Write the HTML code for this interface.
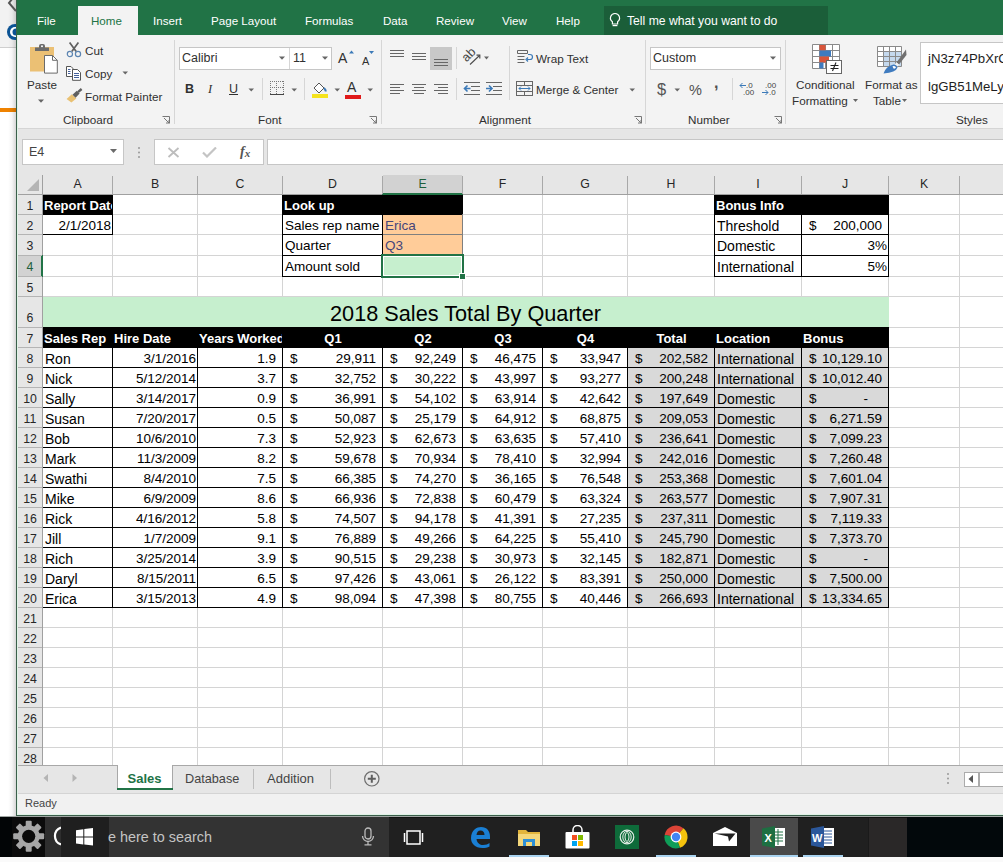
<!DOCTYPE html>
<html><head><meta charset="utf-8">
<style>
html,body{margin:0;padding:0}
body{width:1003px;height:862px;overflow:hidden;position:relative;background:#fff;font-family:"Liberation Sans",sans-serif}
.a{position:absolute}
.t{white-space:nowrap}
.rt{position:absolute;white-space:nowrap;font-size:11.7px;line-height:14px;color:#303030}
.tab{position:absolute;white-space:nowrap;font-size:11.6px;line-height:14px;color:#fff;top:14px}
</style></head><body>
<!-- background window left -->
<div class="a" style="left:0;top:0;width:16px;height:47px;background:#f2f2f2"></div>
<div class="a" style="left:0;top:47px;width:16px;height:1px;background:#cfcfcf"></div>
<div class="a" style="left:0;top:108px;width:16px;height:4px;background:#ef8200"></div>
<div class="a" style="left:8px;top:0;width:8px;height:817px;background:linear-gradient(to right,rgba(0,0,0,0),rgba(0,0,0,0.04) 50%,rgba(0,0,0,0.16))"></div>
<svg class="a" style="left:0;top:0" width="16" height="48"><path d="M16 -6 L9 3 L16 11" stroke="#555" stroke-width="2" fill="none"/><circle cx="15" cy="32" r="8" fill="#0b5394"/><circle cx="15" cy="32" r="5" fill="#fff"/><circle cx="16" cy="32" r="3.5" fill="#0b5394"/></svg>

<!-- excel window -->
<div class="a" style="left:16px;top:0;width:1px;height:816px;background:#3b5f4b"></div>
<div class="a" style="left:17px;top:0;width:986px;height:816px;background:#f3f3f3"></div>
<div class="a" style="left:17px;top:814px;width:986px;height:1px;background:#e0f3e6"></div>
<div class="a" style="left:16px;top:815px;width:987px;height:1px;background:#3a5d4a"></div>
<!-- tab bar -->
<div class="a" style="left:17px;top:0;width:986px;height:35px;background:#217346"></div>
<div class="a" style="left:78px;top:6px;width:60px;height:29px;background:#f3f3f3"></div>
<div class="tab" style="left:37px">File</div>
<div class="tab" style="left:91px;color:#217346">Home</div>
<div class="tab" style="left:153px">Insert</div>
<div class="tab" style="left:211px">Page Layout</div>
<div class="tab" style="left:305px">Formulas</div>
<div class="tab" style="left:383px">Data</div>
<div class="tab" style="left:436px">Review</div>
<div class="tab" style="left:502px">View</div>
<div class="tab" style="left:556px">Help</div>
<div class="a" style="left:604px;top:6px;width:224px;height:29px;background:#1b5e39"></div>
<svg class="a" style="left:608px;top:12px" width="14" height="16"><path d="M7 1.5a4.5 4.5 0 0 0-2.6 8.2V12h5.2V9.7A4.5 4.5 0 0 0 7 1.5z" stroke="#fff" stroke-width="1.2" fill="none"/><path d="M4.6 13.6h4.8" stroke="#fff" stroke-width="1.2"/></svg>
<div class="tab" style="left:627px;font-size:12.2px">Tell me what you want to do</div>

<!-- ribbon -->
<div class="a" style="left:17px;top:128px;width:986px;height:1px;background:#d5d5d5"></div>
<div class="a" style="left:174px;top:40px;width:1px;height:84px;background:#d6d6d6"></div>
<div class="a" style="left:381px;top:40px;width:1px;height:84px;background:#d6d6d6"></div>
<div class="a" style="left:645px;top:40px;width:1px;height:84px;background:#d6d6d6"></div>
<div class="a" style="left:785px;top:40px;width:1px;height:84px;background:#d6d6d6"></div>
<!-- clipboard -->
<svg class="a" style="left:28px;top:42px" width="34" height="34">
 <rect x="2" y="5" width="24" height="24.5" fill="#ebc074"/>
 <path d="M7 5.5 h14 v3.5 h-14z" fill="#6b6b6b"/><path d="M11 6 v-2 q0-2 2-2 h2 q2 0 2 2 v2z" fill="#6b6b6b"/><circle cx="14" cy="4.2" r="1" fill="#fff"/>
 <path d="M16.5 13.5 h8 l4.8 4.8 v12.8 h-12.8z" fill="#fff" stroke="#6b6b6b" stroke-width="1"/>
 <path d="M24.5 13.5 v4.8 h4.8" fill="none" stroke="#6b6b6b" stroke-width="1"/>
</svg>
<div class="rt" style="left:27px;top:78px">Paste</div>
<svg class="a" style="left:37px;top:99px" width="8" height="5"><path d="M1 0.5h6l-3 3.2z" fill="#666"/></svg>
<svg class="a" style="left:66px;top:42px" width="16" height="16"><path d="M3.6 0.5 L10.2 9.6 M12.4 0.5 L5.8 9.6" stroke="#5f5f5f" stroke-width="1.7"/><circle cx="3.9" cy="12" r="2.6" fill="none" stroke="#5b84b1" stroke-width="1.2"/><circle cx="12" cy="12" r="2.6" fill="none" stroke="#5b84b1" stroke-width="1.2"/></svg>
<div class="rt" style="left:85px;top:44px">Cut</div>
<svg class="a" style="left:65px;top:65px" width="17" height="17"><path d="M1.5 1.5h4.5l1.8 1.8v8.2h-6.3z" fill="#fff" stroke="#555"/><path d="M3 4.5h2.5M3 6.5h2.5M3 8.5h2.5" stroke="#44609a" stroke-width="1"/><path d="M7.5 4.5h5l3 3v7.8h-8z" fill="#fff" stroke="#555"/><path d="M9 8.5h5M9 10.5h5M9 12.5h5" stroke="#44609a" stroke-width="1"/></svg>
<div class="rt" style="left:85px;top:67px">Copy</div>
<svg class="a" style="left:122px;top:71px" width="7" height="4"><path d="M0.5 0.5h5.5l-2.75 3z" fill="#666"/></svg>
<svg class="a" style="left:66px;top:88px" width="17" height="16"><path d="M0.6 11 L5.8 6.2 L10.4 10.4 L5.4 14.6z" fill="#e9c173"/><path d="M6.5 6.8 L10.8 2.8 L13.6 5.6 L9.6 9.8z" fill="#5f5f5f"/><path d="M12 4.2 L15.6 1" stroke="#5f5f5f" stroke-width="2.4"/></svg>
<div class="rt" style="left:85px;top:90px">Format Painter</div>
<div class="rt" style="left:63px;top:113px">Clipboard</div>
<svg class="a" style="left:162px;top:116px" width="8" height="8"><path d="M0.5 0.5h7v7" fill="none" stroke="#777"/><path d="M2 2l5 5M4 7h3v-3" stroke="#777" fill="none"/></svg>

<!-- font group -->
<div class="a" style="left:179px;top:47px;width:110px;height:21px;background:#fff;border:1px solid #c6c6c6"></div>
<div class="a" style="left:290px;top:47px;width:41px;height:21px;background:#fff;border:1px solid #c6c6c6;border-left:none"></div>
<div class="a" style="left:289px;top:48px;width:1px;height:21px;background:#d6d6d6"></div>
<div class="rt" style="left:182px;top:51px;font-size:12.5px">Calibri</div>
<div class="rt" style="left:293px;top:51px;font-size:12.5px">11</div>
<svg class="a" style="left:278px;top:56px" width="8" height="5"><path d="M1 0.5h6l-3 3.2z" fill="#666"/></svg>
<svg class="a" style="left:321px;top:56px" width="8" height="5"><path d="M1 0.5h6l-3 3.2z" fill="#666"/></svg>
<div class="rt" style="left:338px;top:51px;font-size:14px">A</div>
<svg class="a" style="left:349px;top:50px" width="6" height="4"><path d="M0 3.5h5l-2.5-3z" fill="#3c7ab8"/></svg>
<div class="rt" style="left:362px;top:54px;font-size:11px">A</div>
<svg class="a" style="left:369px;top:51px" width="6" height="4"><path d="M0 0h5l-2.5 3z" fill="#3c7ab8"/></svg>
<div class="rt" style="left:185px;top:82px;font-weight:bold;font-size:12.5px">B</div>
<div class="rt" style="left:208px;top:82px;font-style:italic;font-size:12.5px;font-family:'Liberation Serif'">I</div>
<div class="rt" style="left:229px;top:82px;font-size:12.5px;text-decoration:underline">U</div>
<svg class="a" style="left:248px;top:88px" width="7" height="4"><path d="M0.5 0.5h5.5l-2.75 3z" fill="#666"/></svg>
<div class="a" style="left:262px;top:78px;width:1px;height:22px;background:#d6d6d6"></div>
<svg class="a" style="left:270px;top:81px" width="14" height="14"><g fill="#777"><rect x="0" y="0" width="1" height="1"/><rect x="0" y="0" width="1" height="1"/><rect x="13" y="0" width="1" height="1"/><rect x="0" y="6" width="1" height="1"/><rect x="6" y="0" width="1" height="1"/><rect x="2" y="0" width="1" height="1"/><rect x="0" y="2" width="1" height="1"/><rect x="13" y="2" width="1" height="1"/><rect x="2" y="6" width="1" height="1"/><rect x="6" y="2" width="1" height="1"/><rect x="4" y="0" width="1" height="1"/><rect x="0" y="4" width="1" height="1"/><rect x="13" y="4" width="1" height="1"/><rect x="4" y="6" width="1" height="1"/><rect x="6" y="4" width="1" height="1"/><rect x="6" y="0" width="1" height="1"/><rect x="0" y="6" width="1" height="1"/><rect x="13" y="6" width="1" height="1"/><rect x="6" y="6" width="1" height="1"/><rect x="6" y="6" width="1" height="1"/><rect x="8" y="0" width="1" height="1"/><rect x="0" y="8" width="1" height="1"/><rect x="13" y="8" width="1" height="1"/><rect x="8" y="6" width="1" height="1"/><rect x="6" y="8" width="1" height="1"/><rect x="10" y="0" width="1" height="1"/><rect x="0" y="10" width="1" height="1"/><rect x="13" y="10" width="1" height="1"/><rect x="10" y="6" width="1" height="1"/><rect x="6" y="10" width="1" height="1"/><rect x="12" y="0" width="1" height="1"/><rect x="0" y="12" width="1" height="1"/><rect x="13" y="12" width="1" height="1"/><rect x="12" y="6" width="1" height="1"/><rect x="6" y="12" width="1" height="1"/></g><path d="M0 13.5h14" stroke="#444"/></svg>
<svg class="a" style="left:291px;top:88px" width="7" height="4"><path d="M0.5 0.5h5.5l-2.75 3z" fill="#666"/></svg>
<div class="a" style="left:304px;top:78px;width:1px;height:22px;background:#d6d6d6"></div>
<svg class="a" style="left:311px;top:80px" width="18" height="18"><path d="M3 8 l5 -5 l5 5 l-5 5z" fill="#fff" stroke="#555"/><path d="M13 8 q2 2 1.5 3.5" stroke="#3c7ab8" stroke-width="2" fill="none"/><rect x="1" y="14" width="16" height="4" fill="#f5e31d"/></svg>
<svg class="a" style="left:334px;top:88px" width="7" height="4"><path d="M0.5 0.5h5.5l-2.75 3z" fill="#666"/></svg>
<div class="rt" style="left:347px;top:80px;font-size:14px">A</div>
<div class="a" style="left:345px;top:95px;width:16px;height:4px;background:#e01a1a"></div>
<svg class="a" style="left:367px;top:88px" width="7" height="4"><path d="M0.5 0.5h5.5l-2.75 3z" fill="#666"/></svg>
<div class="rt" style="left:258px;top:113px">Font</div>
<svg class="a" style="left:369px;top:116px" width="8" height="8"><path d="M0.5 0.5h7v7" fill="none" stroke="#777"/><path d="M2 2l5 5M4 7h3v-3" stroke="#777" fill="none"/></svg>

<!-- alignment group -->
<svg class="a" style="left:388px;top:47px" width="70" height="52">
 <g stroke="#666" stroke-width="1">
 <path d="M2 3.5h14M2 6.5h14M2 9.5h14"/>
 <path d="M24 6.5h14M24 9.5h14M24 12.5h14"/>
 </g>
 <rect x="42" y="0" width="22" height="23" fill="#c8c8c8"/>
 <path d="M46 12.5h14M46 15.5h14M46 18.5h14" stroke="#666"/>
 <g stroke="#666" stroke-width="1">
 <path d="M2 37.5h14M2 40.5h10M2 43.5h14M2 46.5h10"/>
 <path d="M24 37.5h14M26 40.5h10M24 43.5h14M26 46.5h10"/>
 <path d="M46 37.5h14M50 40.5h10M46 43.5h14M50 46.5h10"/>
 </g>
</svg>
<div class="a" style="left:456px;top:47px;width:1px;height:22px;background:#d6d6d6"></div>
<div class="a" style="left:456px;top:78px;width:1px;height:22px;background:#d6d6d6"></div>
<svg class="a" style="left:462px;top:48px" width="30" height="20"><text x="0" y="0" font-size="12.5" font-family="Liberation Sans" fill="#4a4a4a" transform="translate(4.5 14.5) rotate(-45)">ab</text><path d="M8 16.5 L17.5 7.5" stroke="#4a4a4a" stroke-width="1.1"/><path d="M14.5 7.2h3.3v3.3" stroke="#4a4a4a" fill="none" stroke-width="1.2"/><path d="M22 8.5h5l-2.5 3z" fill="#666"/></svg>
<svg class="a" style="left:463px;top:81px" width="42" height="15"><path d="M1 1.5h16M8 5.5h9M8 9.5h9M1 13.5h16" stroke="#666"/><path d="M1.5 7.5h6M4.5 4.5l-3 3l3 3" stroke="#3c7ab8" stroke-width="1.6" fill="none"/><path d="M23 1.5h16M30 5.5h9M30 9.5h9M23 13.5h16" stroke="#666"/><path d="M23 7.5h6M26 4.5l3 3l-3 3" stroke="#3c7ab8" stroke-width="1.6" fill="none"/></svg>
<div class="a" style="left:509px;top:46px;width:1px;height:54px;background:#d6d6d6"></div>
<svg class="a" style="left:516px;top:49px" width="18" height="16"><path d="M1.5 1.5h10v3h-10zM1.5 7.5h7M1.5 10.5h7M1.5 13.5h7" stroke="#666" fill="none"/><path d="M11 10.5h3q2.5 0 2.5-2.5t-2.5-2.5h-2M12 8.5l-2 2l2 2" stroke="#3c7ab8" fill="none" stroke-width="1.2"/></svg>
<div class="rt" style="left:536px;top:52px">Wrap Text</div>
<svg class="a" style="left:516px;top:81px" width="17" height="15"><rect x="0.5" y="0.5" width="16" height="14" fill="none" stroke="#666"/><path d="M0.5 4.5h16M0.5 10.5h16M8.5 0.5v4M8.5 10.5v4" stroke="#666"/><path d="M3 7.5h11M5 5.5l-2 2l2 2M12 5.5l2 2l-2 2" stroke="#3c7ab8" fill="none"/></svg>
<div class="rt" style="left:536px;top:83px">Merge &amp; Center</div>
<svg class="a" style="left:629px;top:88px" width="7" height="4"><path d="M0.5 0.5h5.5l-2.75 3z" fill="#666"/></svg>
<div class="rt" style="left:479px;top:113px">Alignment</div>
<svg class="a" style="left:634px;top:116px" width="8" height="8"><path d="M0.5 0.5h7v7" fill="none" stroke="#777"/><path d="M2 2l5 5M4 7h3v-3" stroke="#777" fill="none"/></svg>

<!-- number group -->
<div class="a" style="left:650px;top:47px;width:129px;height:21px;background:#fff;border:1px solid #c6c6c6"></div>
<div class="rt" style="left:653px;top:51px;font-size:12.5px">Custom</div>
<svg class="a" style="left:769px;top:56px" width="8" height="5"><path d="M1 0.5h6l-3 3.2z" fill="#666"/></svg>
<div class="rt" style="left:657px;top:81px;font-size:16.5px;line-height:16px;color:#555">$</div>
<svg class="a" style="left:674px;top:88px" width="7" height="4"><path d="M0.5 0.5h5.5l-2.75 3z" fill="#666"/></svg>
<div class="rt" style="left:689px;top:82px;font-size:14.5px;line-height:16px;color:#505050">%</div>
<div class="rt" style="left:714px;top:76px;font-size:16px;font-weight:bold;color:#505050">,</div>
<div class="a" style="left:732px;top:78px;width:1px;height:22px;background:#d6d6d6"></div>
<svg class="a" style="left:739px;top:81px" width="40" height="15">
 <text x="7" y="7" font-size="8" font-family="Liberation Sans" fill="#444">.0</text><text x="4" y="14" font-size="8" font-family="Liberation Sans" fill="#444">.00</text>
 <path d="M1 4.5h6M3.5 2l-2.5 2.5l2.5 2.5" stroke="#3c7ab8" fill="none"/>
 <text x="26" y="7" font-size="8" font-family="Liberation Sans" fill="#444">.00</text><text x="30" y="14" font-size="8" font-family="Liberation Sans" fill="#444">.0</text>
 <path d="M23 11.5h6M26.5 9l2.5 2.5l-2.5 2.5" stroke="#3c7ab8" fill="none"/>
</svg>
<div class="rt" style="left:688px;top:113px">Number</div>
<svg class="a" style="left:774px;top:116px" width="8" height="8"><path d="M0.5 0.5h7v7" fill="none" stroke="#777"/><path d="M2 2l5 5M4 7h3v-3" stroke="#777" fill="none"/></svg>

<!-- styles group -->
<svg class="a" style="left:811px;top:43px" width="33" height="32">
 <rect x="1.5" y="1.5" width="27" height="24" fill="#fff"/>
 <path d="M1.5 1.5h27v24h-27zM1.5 7.5h27M1.5 13.5h27M1.5 19.5h27M8.5 1.5v24M14.5 1.5v24M21.5 1.5v24" fill="none" stroke="#8a8a8a"/>
 <rect x="8.5" y="2" width="6" height="5.5" fill="#d9553a"/><rect x="8.5" y="7.5" width="11.5" height="6" fill="#3f7bbf"/><rect x="8.5" y="13.5" width="9.5" height="6" fill="#d9553a"/><rect x="8.5" y="19.5" width="4" height="6" fill="#3f7bbf"/>
 <rect x="15.5" y="17.5" width="15" height="13" fill="#fff" stroke="#666"/>
 <path d="M19.5 22.5h8M19.5 25.5h8M25 19.5l-3.5 8.5" stroke="#222" stroke-width="1.1"/>
</svg>
<div class="rt" style="left:796px;top:78px">Conditional</div>
<div class="rt" style="left:792px;top:94px">Formatting</div>
<svg class="a" style="left:853px;top:99px" width="6" height="4"><path d="M0 0h5l-2.5 3z" fill="#666"/></svg>
<svg class="a" style="left:876px;top:44px" width="33" height="31">
 <rect x="1.5" y="2.5" width="24" height="20" fill="#fff"/>
 <rect x="7.5" y="7.5" width="18" height="15" fill="#c5d9ee"/>
 <path d="M1.5 2.5h24v20h-24zM1.5 7.5h24M1.5 12.5h24M1.5 17.5h24M7.5 2.5v20M13.5 2.5v20M19.5 2.5v20" fill="none" stroke="#8a8a8a"/>
 <path d="M30 5.5 L30.5 11 L23 20.5 L20.5 18.5z" fill="#707070"/>
 <path d="M20.5 18.5 L23 20.5 L21.5 22.5 L18.5 20.5z" fill="#f3f3f3"/>
 <path d="M7.5 29.5 Q10 22 17.5 20.5 Q21 20.8 21.5 23.5 Q20 28.5 7.5 29.5z" fill="#3f7bbf"/>
 <path d="M16.5 22.3 Q19.5 21.5 20 23.6 Q19 25 17.5 24.5z" fill="#fff"/>
</svg>
<div class="rt" style="left:865px;top:78px">Format as</div>
<div class="rt" style="left:873px;top:94px">Table</div>
<svg class="a" style="left:902px;top:99px" width="6" height="4"><path d="M0 0h5l-2.5 3z" fill="#666"/></svg>
<div class="a" style="left:920px;top:42px;width:90px;height:62px;background:#fff;border:1px solid #c6c6c6;box-sizing:border-box"></div>
<div class="a t" style="left:928px;top:51px;font-size:13.2px;line-height:16px;color:#1e1e1e">jN3z74PbXrC</div>
<div class="a t" style="left:928px;top:79px;font-size:13.2px;line-height:16px;color:#1e1e1e">lgGB51MeLy</div>
<div class="rt" style="left:956px;top:113px">Styles</div>

<!-- formula bar -->
<div class="a" style="left:17px;top:129px;width:986px;height:46px;background:#e6e6e6"></div>
<div class="a" style="left:22px;top:139px;width:100px;height:24px;background:#fff;border:1px solid #c6c6c6"></div>
<div class="a t" style="left:29px;top:144px;font-size:12.5px;line-height:16px;color:#444">E4</div>
<svg class="a" style="left:110px;top:149px" width="9" height="6"><path d="M0 0h7l-3.5 4z" fill="#6a6a6a"/></svg>
<svg class="a" style="left:137px;top:146px" width="4" height="13"><circle cx="2" cy="2" r="1" fill="#999"/><circle cx="2" cy="6.5" r="1" fill="#999"/><circle cx="2" cy="11" r="1" fill="#999"/></svg>
<div class="a" style="left:154px;top:139px;width:108px;height:24px;background:#fff;border:1px solid #c6c6c6"></div>
<svg class="a" style="left:167px;top:147px" width="13" height="11"><path d="M1.5 1l10 9M11.5 1l-10 9" stroke="#bdbdbd" stroke-width="1.8"/></svg>
<svg class="a" style="left:202px;top:147px" width="15" height="11"><path d="M1 5.5l4 4l9 -9" stroke="#c4c4c4" stroke-width="2.2" fill="none"/></svg>
<div class="a t" style="left:240px;top:144px;font-size:14px;line-height:16px;color:#555;font-family:'Liberation Serif';font-style:italic;font-weight:bold">f<span style="font-size:11px;position:relative;top:1px">x</span></div>
<div class="a" style="left:267px;top:139px;width:740px;height:24px;background:#fff;border:1px solid #c6c6c6"></div>

<div class="a" style="left:43px;top:195px;width:960px;height:570px;background:#fff;"></div>
<div class="a" style="left:112px;top:195px;width:1px;height:570px;background:#d4d4d4;"></div>
<div class="a" style="left:197px;top:195px;width:1px;height:570px;background:#d4d4d4;"></div>
<div class="a" style="left:282px;top:195px;width:1px;height:570px;background:#d4d4d4;"></div>
<div class="a" style="left:382px;top:195px;width:1px;height:570px;background:#d4d4d4;"></div>
<div class="a" style="left:462px;top:195px;width:1px;height:570px;background:#d4d4d4;"></div>
<div class="a" style="left:542px;top:195px;width:1px;height:570px;background:#d4d4d4;"></div>
<div class="a" style="left:627px;top:195px;width:1px;height:570px;background:#d4d4d4;"></div>
<div class="a" style="left:714px;top:195px;width:1px;height:570px;background:#d4d4d4;"></div>
<div class="a" style="left:801px;top:195px;width:1px;height:570px;background:#d4d4d4;"></div>
<div class="a" style="left:888px;top:195px;width:1px;height:570px;background:#d4d4d4;"></div>
<div class="a" style="left:959px;top:195px;width:1px;height:570px;background:#d4d4d4;"></div>
<div class="a" style="left:43px;top:214px;width:960px;height:1px;background:#d4d4d4;"></div>
<div class="a" style="left:43px;top:234px;width:960px;height:1px;background:#d4d4d4;"></div>
<div class="a" style="left:43px;top:255px;width:960px;height:1px;background:#d4d4d4;"></div>
<div class="a" style="left:43px;top:276px;width:960px;height:1px;background:#d4d4d4;"></div>
<div class="a" style="left:43px;top:296px;width:960px;height:1px;background:#d4d4d4;"></div>
<div class="a" style="left:43px;top:327px;width:960px;height:1px;background:#d4d4d4;"></div>
<div class="a" style="left:43px;top:347px;width:960px;height:1px;background:#d4d4d4;"></div>
<div class="a" style="left:43px;top:367px;width:960px;height:1px;background:#d4d4d4;"></div>
<div class="a" style="left:43px;top:387px;width:960px;height:1px;background:#d4d4d4;"></div>
<div class="a" style="left:43px;top:407px;width:960px;height:1px;background:#d4d4d4;"></div>
<div class="a" style="left:43px;top:427px;width:960px;height:1px;background:#d4d4d4;"></div>
<div class="a" style="left:43px;top:447px;width:960px;height:1px;background:#d4d4d4;"></div>
<div class="a" style="left:43px;top:467px;width:960px;height:1px;background:#d4d4d4;"></div>
<div class="a" style="left:43px;top:487px;width:960px;height:1px;background:#d4d4d4;"></div>
<div class="a" style="left:43px;top:507px;width:960px;height:1px;background:#d4d4d4;"></div>
<div class="a" style="left:43px;top:527px;width:960px;height:1px;background:#d4d4d4;"></div>
<div class="a" style="left:43px;top:547px;width:960px;height:1px;background:#d4d4d4;"></div>
<div class="a" style="left:43px;top:567px;width:960px;height:1px;background:#d4d4d4;"></div>
<div class="a" style="left:43px;top:587px;width:960px;height:1px;background:#d4d4d4;"></div>
<div class="a" style="left:43px;top:607px;width:960px;height:1px;background:#d4d4d4;"></div>
<div class="a" style="left:43px;top:627px;width:960px;height:1px;background:#d4d4d4;"></div>
<div class="a" style="left:43px;top:647px;width:960px;height:1px;background:#d4d4d4;"></div>
<div class="a" style="left:43px;top:667px;width:960px;height:1px;background:#d4d4d4;"></div>
<div class="a" style="left:43px;top:687px;width:960px;height:1px;background:#d4d4d4;"></div>
<div class="a" style="left:43px;top:707px;width:960px;height:1px;background:#d4d4d4;"></div>
<div class="a" style="left:43px;top:727px;width:960px;height:1px;background:#d4d4d4;"></div>
<div class="a" style="left:43px;top:747px;width:960px;height:1px;background:#d4d4d4;"></div>
<div class="a" style="left:43px;top:195px;width:70px;height:20px;background:#000;"></div>
<div class="a" style="left:282px;top:195px;width:181px;height:20px;background:#000;"></div>
<div class="a" style="left:714px;top:195px;width:175px;height:20px;background:#000;"></div>
<div class="a t" style="left:43px;top:196px;width:69px;height:20px;font-size:13px;line-height:20px;color:#fff;text-align:left;padding-left:1px;padding-right:3px;box-sizing:border-box;font-weight:bold;overflow:hidden;">Report Date</div>
<div class="a t" style="left:283px;top:196px;width:99px;height:20px;font-size:13px;line-height:20px;color:#fff;text-align:left;padding-left:1px;padding-right:3px;box-sizing:border-box;font-weight:bold;overflow:hidden;">Look up</div>
<div class="a t" style="left:715px;top:196px;width:86px;height:20px;font-size:13px;line-height:20px;color:#fff;text-align:left;padding-left:1px;padding-right:3px;box-sizing:border-box;font-weight:bold;overflow:hidden;">Bonus Info</div>
<div class="a t" style="left:43px;top:216px;width:69px;height:20px;font-size:13.5px;line-height:20px;color:#000;text-align:right;padding-left:2px;padding-right:1px;box-sizing:border-box;overflow:hidden;">2/1/2018</div>
<div class="a" style="left:42px;top:234px;width:71px;height:1px;background:#000;"></div>
<div class="a" style="left:112px;top:214px;width:1px;height:21px;background:#000;"></div>
<div class="a t" style="left:283px;top:216px;width:99px;height:20px;font-size:13.5px;line-height:20px;color:#000;text-align:left;padding-left:2px;padding-right:3px;box-sizing:border-box;">Sales rep name</div>
<div class="a t" style="left:283px;top:236px;width:99px;height:20px;font-size:13.5px;line-height:20px;color:#000;text-align:left;padding-left:2px;padding-right:3px;box-sizing:border-box;">Quarter</div>
<div class="a t" style="left:283px;top:257px;width:99px;height:20px;font-size:13.5px;line-height:20px;color:#000;text-align:left;padding-left:2px;padding-right:3px;box-sizing:border-box;">Amount sold</div>
<div class="a" style="left:383px;top:215px;width:79px;height:40px;background:#ffcc99;"></div>
<div class="a t" style="left:383px;top:216px;width:79px;height:20px;font-size:13.5px;line-height:20px;color:#45457a;text-align:left;padding-left:2px;padding-right:3px;box-sizing:border-box;overflow:hidden;">Erica</div>
<div class="a t" style="left:383px;top:236px;width:79px;height:20px;font-size:13.5px;line-height:20px;color:#45457a;text-align:left;padding-left:2px;padding-right:3px;box-sizing:border-box;overflow:hidden;">Q3</div>
<div class="a" style="left:382px;top:234px;width:81px;height:1px;background:#7f7f7f;"></div>
<div class="a" style="left:462px;top:214px;width:1px;height:42px;background:#7f7f7f;"></div>
<div class="a" style="left:382px;top:255px;width:81px;height:1px;background:#7f7f7f;"></div>
<div class="a" style="left:383px;top:256px;width:79px;height:20px;background:#c6efce;"></div>
<div class="a" style="left:282px;top:234px;width:101px;height:1px;background:#000;"></div>
<div class="a" style="left:282px;top:255px;width:101px;height:1px;background:#000;"></div>
<div class="a" style="left:282px;top:276px;width:101px;height:1px;background:#000;"></div>
<div class="a" style="left:282px;top:214px;width:1px;height:63px;background:#000;"></div>
<div class="a" style="left:382px;top:214px;width:1px;height:63px;background:#000;"></div>
<div class="a t" style="left:715px;top:216px;width:86px;height:20px;font-size:14px;line-height:20px;color:#000;text-align:left;padding-left:2px;padding-right:3px;box-sizing:border-box;overflow:hidden;">Threshold</div>
<div class="a" style="left:714px;top:234px;width:175px;height:1px;background:#000;"></div>
<div class="a t" style="left:715px;top:236px;width:86px;height:20px;font-size:14px;line-height:20px;color:#000;text-align:left;padding-left:2px;padding-right:3px;box-sizing:border-box;overflow:hidden;">Domestic</div>
<div class="a" style="left:714px;top:255px;width:175px;height:1px;background:#000;"></div>
<div class="a t" style="left:715px;top:257px;width:86px;height:20px;font-size:14px;line-height:20px;color:#000;text-align:left;padding-left:2px;padding-right:3px;box-sizing:border-box;overflow:hidden;">International</div>
<div class="a" style="left:714px;top:276px;width:175px;height:1px;background:#000;"></div>
<div class="a" style="left:714px;top:214px;width:1px;height:63px;background:#000;"></div>
<div class="a" style="left:801px;top:214px;width:1px;height:63px;background:#000;"></div>
<div class="a" style="left:888px;top:214px;width:1px;height:63px;background:#000;"></div>
<div class="a t" style="left:802px;top:216px;width:86px;height:20px;font-size:13.5px;line-height:20px;color:#000;text-align:left;padding-left:7px;padding-right:3px;box-sizing:border-box;overflow:hidden;">$</div>
<div class="a t" style="left:802px;top:216px;width:86px;height:20px;font-size:13.5px;line-height:20px;color:#000;text-align:right;padding-left:2px;padding-right:6px;box-sizing:border-box;overflow:hidden;">200,000</div>
<div class="a t" style="left:802px;top:236px;width:86px;height:20px;font-size:13.5px;line-height:20px;color:#000;text-align:right;padding-left:2px;padding-right:1px;box-sizing:border-box;overflow:hidden;">3%</div>
<div class="a t" style="left:802px;top:257px;width:86px;height:20px;font-size:13.5px;line-height:20px;color:#000;text-align:right;padding-left:2px;padding-right:1px;box-sizing:border-box;overflow:hidden;">5%</div>
<div class="a" style="left:43px;top:297px;width:846px;height:30px;background:#c6efce;"></div>
<div class="a t" style="left:43px;top:299px;width:845px;height:30px;font-size:21.7px;line-height:30px;text-align:center;color:#000">2018 Sales Total By Quarter</div>
<div class="a" style="left:43px;top:327px;width:846px;height:21px;background:#000;"></div>
<div class="a t" style="left:43px;top:329px;width:69px;height:20px;font-size:13px;line-height:20px;color:#fff;text-align:left;padding-left:1px;padding-right:0px;box-sizing:border-box;font-weight:bold;overflow:hidden;">Sales Rep</div>
<div class="a t" style="left:113px;top:329px;width:84px;height:20px;font-size:13px;line-height:20px;color:#fff;text-align:left;padding-left:1px;padding-right:0px;box-sizing:border-box;font-weight:bold;overflow:hidden;">Hire Date</div>
<div class="a t" style="left:198px;top:329px;width:84px;height:20px;font-size:13px;line-height:20px;color:#fff;text-align:left;padding-left:1px;padding-right:0px;box-sizing:border-box;font-weight:bold;overflow:hidden;">Years Worked</div>
<div class="a t" style="left:283px;top:329px;width:99px;height:20px;font-size:13px;line-height:20px;color:#fff;text-align:center;padding-left:1px;padding-right:0px;box-sizing:border-box;font-weight:bold;overflow:hidden;">Q1</div>
<div class="a t" style="left:383px;top:329px;width:79px;height:20px;font-size:13px;line-height:20px;color:#fff;text-align:center;padding-left:1px;padding-right:0px;box-sizing:border-box;font-weight:bold;overflow:hidden;">Q2</div>
<div class="a t" style="left:463px;top:329px;width:79px;height:20px;font-size:13px;line-height:20px;color:#fff;text-align:center;padding-left:1px;padding-right:0px;box-sizing:border-box;font-weight:bold;overflow:hidden;">Q3</div>
<div class="a t" style="left:543px;top:329px;width:84px;height:20px;font-size:13px;line-height:20px;color:#fff;text-align:center;padding-left:1px;padding-right:0px;box-sizing:border-box;font-weight:bold;overflow:hidden;">Q4</div>
<div class="a t" style="left:628px;top:329px;width:86px;height:20px;font-size:13px;line-height:20px;color:#fff;text-align:center;padding-left:1px;padding-right:0px;box-sizing:border-box;font-weight:bold;overflow:hidden;">Total</div>
<div class="a t" style="left:715px;top:329px;width:86px;height:20px;font-size:13px;line-height:20px;color:#fff;text-align:left;padding-left:1px;padding-right:0px;box-sizing:border-box;font-weight:bold;overflow:hidden;">Location</div>
<div class="a t" style="left:802px;top:329px;width:86px;height:20px;font-size:13px;line-height:20px;color:#fff;text-align:left;padding-left:1px;padding-right:0px;box-sizing:border-box;font-weight:bold;overflow:hidden;">Bonus</div>
<div class="a" style="left:628px;top:348px;width:260px;height:259px;background:#d9d9d9;"></div>
<div class="a t" style="left:43px;top:349px;width:69px;height:20px;font-size:14px;line-height:20px;color:#000;text-align:left;padding-left:2px;padding-right:3px;box-sizing:border-box;overflow:hidden;">Ron</div>
<div class="a t" style="left:113px;top:349px;width:84px;height:20px;font-size:13.5px;line-height:20px;color:#000;text-align:right;padding-left:2px;padding-right:1px;box-sizing:border-box;overflow:hidden;">3/1/2016</div>
<div class="a t" style="left:198px;top:349px;width:84px;height:20px;font-size:13.5px;line-height:20px;color:#000;text-align:right;padding-left:2px;padding-right:6px;box-sizing:border-box;overflow:hidden;">1.9</div>
<div class="a t" style="left:283px;top:349px;width:99px;height:20px;font-size:13.5px;line-height:20px;color:#000;text-align:left;padding-left:7px;padding-right:3px;box-sizing:border-box;overflow:hidden;">$</div>
<div class="a t" style="left:283px;top:349px;width:99px;height:20px;font-size:13.5px;line-height:20px;color:#000;text-align:right;padding-left:2px;padding-right:6px;box-sizing:border-box;overflow:hidden;">29,911</div>
<div class="a t" style="left:383px;top:349px;width:79px;height:20px;font-size:13.5px;line-height:20px;color:#000;text-align:left;padding-left:7px;padding-right:3px;box-sizing:border-box;overflow:hidden;">$</div>
<div class="a t" style="left:383px;top:349px;width:79px;height:20px;font-size:13.5px;line-height:20px;color:#000;text-align:right;padding-left:2px;padding-right:6px;box-sizing:border-box;overflow:hidden;">92,249</div>
<div class="a t" style="left:463px;top:349px;width:79px;height:20px;font-size:13.5px;line-height:20px;color:#000;text-align:left;padding-left:7px;padding-right:3px;box-sizing:border-box;overflow:hidden;">$</div>
<div class="a t" style="left:463px;top:349px;width:79px;height:20px;font-size:13.5px;line-height:20px;color:#000;text-align:right;padding-left:2px;padding-right:6px;box-sizing:border-box;overflow:hidden;">46,475</div>
<div class="a t" style="left:543px;top:349px;width:84px;height:20px;font-size:13.5px;line-height:20px;color:#000;text-align:left;padding-left:7px;padding-right:3px;box-sizing:border-box;overflow:hidden;">$</div>
<div class="a t" style="left:543px;top:349px;width:84px;height:20px;font-size:13.5px;line-height:20px;color:#000;text-align:right;padding-left:2px;padding-right:6px;box-sizing:border-box;overflow:hidden;">33,947</div>
<div class="a t" style="left:628px;top:349px;width:86px;height:20px;font-size:13.5px;line-height:20px;color:#000;text-align:left;padding-left:7px;padding-right:3px;box-sizing:border-box;overflow:hidden;">$</div>
<div class="a t" style="left:628px;top:349px;width:86px;height:20px;font-size:13.5px;line-height:20px;color:#000;text-align:right;padding-left:2px;padding-right:6px;box-sizing:border-box;overflow:hidden;">202,582</div>
<div class="a t" style="left:715px;top:349px;width:86px;height:20px;font-size:14px;line-height:20px;color:#000;text-align:left;padding-left:2px;padding-right:3px;box-sizing:border-box;overflow:hidden;">International</div>
<div class="a t" style="left:802px;top:349px;width:86px;height:20px;font-size:13.5px;line-height:20px;color:#000;text-align:left;padding-left:7px;padding-right:3px;box-sizing:border-box;overflow:hidden;">$</div>
<div class="a t" style="left:802px;top:349px;width:86px;height:20px;font-size:13.5px;line-height:20px;color:#000;text-align:right;padding-left:2px;padding-right:6px;box-sizing:border-box;overflow:hidden;">10,129.10</div>
<div class="a t" style="left:43px;top:369px;width:69px;height:20px;font-size:14px;line-height:20px;color:#000;text-align:left;padding-left:2px;padding-right:3px;box-sizing:border-box;overflow:hidden;">Nick</div>
<div class="a t" style="left:113px;top:369px;width:84px;height:20px;font-size:13.5px;line-height:20px;color:#000;text-align:right;padding-left:2px;padding-right:1px;box-sizing:border-box;overflow:hidden;">5/12/2014</div>
<div class="a t" style="left:198px;top:369px;width:84px;height:20px;font-size:13.5px;line-height:20px;color:#000;text-align:right;padding-left:2px;padding-right:6px;box-sizing:border-box;overflow:hidden;">3.7</div>
<div class="a t" style="left:283px;top:369px;width:99px;height:20px;font-size:13.5px;line-height:20px;color:#000;text-align:left;padding-left:7px;padding-right:3px;box-sizing:border-box;overflow:hidden;">$</div>
<div class="a t" style="left:283px;top:369px;width:99px;height:20px;font-size:13.5px;line-height:20px;color:#000;text-align:right;padding-left:2px;padding-right:6px;box-sizing:border-box;overflow:hidden;">32,752</div>
<div class="a t" style="left:383px;top:369px;width:79px;height:20px;font-size:13.5px;line-height:20px;color:#000;text-align:left;padding-left:7px;padding-right:3px;box-sizing:border-box;overflow:hidden;">$</div>
<div class="a t" style="left:383px;top:369px;width:79px;height:20px;font-size:13.5px;line-height:20px;color:#000;text-align:right;padding-left:2px;padding-right:6px;box-sizing:border-box;overflow:hidden;">30,222</div>
<div class="a t" style="left:463px;top:369px;width:79px;height:20px;font-size:13.5px;line-height:20px;color:#000;text-align:left;padding-left:7px;padding-right:3px;box-sizing:border-box;overflow:hidden;">$</div>
<div class="a t" style="left:463px;top:369px;width:79px;height:20px;font-size:13.5px;line-height:20px;color:#000;text-align:right;padding-left:2px;padding-right:6px;box-sizing:border-box;overflow:hidden;">43,997</div>
<div class="a t" style="left:543px;top:369px;width:84px;height:20px;font-size:13.5px;line-height:20px;color:#000;text-align:left;padding-left:7px;padding-right:3px;box-sizing:border-box;overflow:hidden;">$</div>
<div class="a t" style="left:543px;top:369px;width:84px;height:20px;font-size:13.5px;line-height:20px;color:#000;text-align:right;padding-left:2px;padding-right:6px;box-sizing:border-box;overflow:hidden;">93,277</div>
<div class="a t" style="left:628px;top:369px;width:86px;height:20px;font-size:13.5px;line-height:20px;color:#000;text-align:left;padding-left:7px;padding-right:3px;box-sizing:border-box;overflow:hidden;">$</div>
<div class="a t" style="left:628px;top:369px;width:86px;height:20px;font-size:13.5px;line-height:20px;color:#000;text-align:right;padding-left:2px;padding-right:6px;box-sizing:border-box;overflow:hidden;">200,248</div>
<div class="a t" style="left:715px;top:369px;width:86px;height:20px;font-size:14px;line-height:20px;color:#000;text-align:left;padding-left:2px;padding-right:3px;box-sizing:border-box;overflow:hidden;">International</div>
<div class="a t" style="left:802px;top:369px;width:86px;height:20px;font-size:13.5px;line-height:20px;color:#000;text-align:left;padding-left:7px;padding-right:3px;box-sizing:border-box;overflow:hidden;">$</div>
<div class="a t" style="left:802px;top:369px;width:86px;height:20px;font-size:13.5px;line-height:20px;color:#000;text-align:right;padding-left:2px;padding-right:6px;box-sizing:border-box;overflow:hidden;">10,012.40</div>
<div class="a t" style="left:43px;top:389px;width:69px;height:20px;font-size:14px;line-height:20px;color:#000;text-align:left;padding-left:2px;padding-right:3px;box-sizing:border-box;overflow:hidden;">Sally</div>
<div class="a t" style="left:113px;top:389px;width:84px;height:20px;font-size:13.5px;line-height:20px;color:#000;text-align:right;padding-left:2px;padding-right:1px;box-sizing:border-box;overflow:hidden;">3/14/2017</div>
<div class="a t" style="left:198px;top:389px;width:84px;height:20px;font-size:13.5px;line-height:20px;color:#000;text-align:right;padding-left:2px;padding-right:6px;box-sizing:border-box;overflow:hidden;">0.9</div>
<div class="a t" style="left:283px;top:389px;width:99px;height:20px;font-size:13.5px;line-height:20px;color:#000;text-align:left;padding-left:7px;padding-right:3px;box-sizing:border-box;overflow:hidden;">$</div>
<div class="a t" style="left:283px;top:389px;width:99px;height:20px;font-size:13.5px;line-height:20px;color:#000;text-align:right;padding-left:2px;padding-right:6px;box-sizing:border-box;overflow:hidden;">36,991</div>
<div class="a t" style="left:383px;top:389px;width:79px;height:20px;font-size:13.5px;line-height:20px;color:#000;text-align:left;padding-left:7px;padding-right:3px;box-sizing:border-box;overflow:hidden;">$</div>
<div class="a t" style="left:383px;top:389px;width:79px;height:20px;font-size:13.5px;line-height:20px;color:#000;text-align:right;padding-left:2px;padding-right:6px;box-sizing:border-box;overflow:hidden;">54,102</div>
<div class="a t" style="left:463px;top:389px;width:79px;height:20px;font-size:13.5px;line-height:20px;color:#000;text-align:left;padding-left:7px;padding-right:3px;box-sizing:border-box;overflow:hidden;">$</div>
<div class="a t" style="left:463px;top:389px;width:79px;height:20px;font-size:13.5px;line-height:20px;color:#000;text-align:right;padding-left:2px;padding-right:6px;box-sizing:border-box;overflow:hidden;">63,914</div>
<div class="a t" style="left:543px;top:389px;width:84px;height:20px;font-size:13.5px;line-height:20px;color:#000;text-align:left;padding-left:7px;padding-right:3px;box-sizing:border-box;overflow:hidden;">$</div>
<div class="a t" style="left:543px;top:389px;width:84px;height:20px;font-size:13.5px;line-height:20px;color:#000;text-align:right;padding-left:2px;padding-right:6px;box-sizing:border-box;overflow:hidden;">42,642</div>
<div class="a t" style="left:628px;top:389px;width:86px;height:20px;font-size:13.5px;line-height:20px;color:#000;text-align:left;padding-left:7px;padding-right:3px;box-sizing:border-box;overflow:hidden;">$</div>
<div class="a t" style="left:628px;top:389px;width:86px;height:20px;font-size:13.5px;line-height:20px;color:#000;text-align:right;padding-left:2px;padding-right:6px;box-sizing:border-box;overflow:hidden;">197,649</div>
<div class="a t" style="left:715px;top:389px;width:86px;height:20px;font-size:14px;line-height:20px;color:#000;text-align:left;padding-left:2px;padding-right:3px;box-sizing:border-box;overflow:hidden;">Domestic</div>
<div class="a t" style="left:802px;top:389px;width:86px;height:20px;font-size:13.5px;line-height:20px;color:#000;text-align:left;padding-left:7px;padding-right:3px;box-sizing:border-box;overflow:hidden;">$</div>
<div class="a t" style="left:802px;top:389px;width:86px;height:20px;font-size:13.5px;line-height:20px;color:#000;text-align:right;padding-left:2px;padding-right:20px;box-sizing:border-box;overflow:hidden;">-</div>
<div class="a t" style="left:43px;top:409px;width:69px;height:20px;font-size:14px;line-height:20px;color:#000;text-align:left;padding-left:2px;padding-right:3px;box-sizing:border-box;overflow:hidden;">Susan</div>
<div class="a t" style="left:113px;top:409px;width:84px;height:20px;font-size:13.5px;line-height:20px;color:#000;text-align:right;padding-left:2px;padding-right:1px;box-sizing:border-box;overflow:hidden;">7/20/2017</div>
<div class="a t" style="left:198px;top:409px;width:84px;height:20px;font-size:13.5px;line-height:20px;color:#000;text-align:right;padding-left:2px;padding-right:6px;box-sizing:border-box;overflow:hidden;">0.5</div>
<div class="a t" style="left:283px;top:409px;width:99px;height:20px;font-size:13.5px;line-height:20px;color:#000;text-align:left;padding-left:7px;padding-right:3px;box-sizing:border-box;overflow:hidden;">$</div>
<div class="a t" style="left:283px;top:409px;width:99px;height:20px;font-size:13.5px;line-height:20px;color:#000;text-align:right;padding-left:2px;padding-right:6px;box-sizing:border-box;overflow:hidden;">50,087</div>
<div class="a t" style="left:383px;top:409px;width:79px;height:20px;font-size:13.5px;line-height:20px;color:#000;text-align:left;padding-left:7px;padding-right:3px;box-sizing:border-box;overflow:hidden;">$</div>
<div class="a t" style="left:383px;top:409px;width:79px;height:20px;font-size:13.5px;line-height:20px;color:#000;text-align:right;padding-left:2px;padding-right:6px;box-sizing:border-box;overflow:hidden;">25,179</div>
<div class="a t" style="left:463px;top:409px;width:79px;height:20px;font-size:13.5px;line-height:20px;color:#000;text-align:left;padding-left:7px;padding-right:3px;box-sizing:border-box;overflow:hidden;">$</div>
<div class="a t" style="left:463px;top:409px;width:79px;height:20px;font-size:13.5px;line-height:20px;color:#000;text-align:right;padding-left:2px;padding-right:6px;box-sizing:border-box;overflow:hidden;">64,912</div>
<div class="a t" style="left:543px;top:409px;width:84px;height:20px;font-size:13.5px;line-height:20px;color:#000;text-align:left;padding-left:7px;padding-right:3px;box-sizing:border-box;overflow:hidden;">$</div>
<div class="a t" style="left:543px;top:409px;width:84px;height:20px;font-size:13.5px;line-height:20px;color:#000;text-align:right;padding-left:2px;padding-right:6px;box-sizing:border-box;overflow:hidden;">68,875</div>
<div class="a t" style="left:628px;top:409px;width:86px;height:20px;font-size:13.5px;line-height:20px;color:#000;text-align:left;padding-left:7px;padding-right:3px;box-sizing:border-box;overflow:hidden;">$</div>
<div class="a t" style="left:628px;top:409px;width:86px;height:20px;font-size:13.5px;line-height:20px;color:#000;text-align:right;padding-left:2px;padding-right:6px;box-sizing:border-box;overflow:hidden;">209,053</div>
<div class="a t" style="left:715px;top:409px;width:86px;height:20px;font-size:14px;line-height:20px;color:#000;text-align:left;padding-left:2px;padding-right:3px;box-sizing:border-box;overflow:hidden;">Domestic</div>
<div class="a t" style="left:802px;top:409px;width:86px;height:20px;font-size:13.5px;line-height:20px;color:#000;text-align:left;padding-left:7px;padding-right:3px;box-sizing:border-box;overflow:hidden;">$</div>
<div class="a t" style="left:802px;top:409px;width:86px;height:20px;font-size:13.5px;line-height:20px;color:#000;text-align:right;padding-left:2px;padding-right:6px;box-sizing:border-box;overflow:hidden;">6,271.59</div>
<div class="a t" style="left:43px;top:429px;width:69px;height:20px;font-size:14px;line-height:20px;color:#000;text-align:left;padding-left:2px;padding-right:3px;box-sizing:border-box;overflow:hidden;">Bob</div>
<div class="a t" style="left:113px;top:429px;width:84px;height:20px;font-size:13.5px;line-height:20px;color:#000;text-align:right;padding-left:2px;padding-right:1px;box-sizing:border-box;overflow:hidden;">10/6/2010</div>
<div class="a t" style="left:198px;top:429px;width:84px;height:20px;font-size:13.5px;line-height:20px;color:#000;text-align:right;padding-left:2px;padding-right:6px;box-sizing:border-box;overflow:hidden;">7.3</div>
<div class="a t" style="left:283px;top:429px;width:99px;height:20px;font-size:13.5px;line-height:20px;color:#000;text-align:left;padding-left:7px;padding-right:3px;box-sizing:border-box;overflow:hidden;">$</div>
<div class="a t" style="left:283px;top:429px;width:99px;height:20px;font-size:13.5px;line-height:20px;color:#000;text-align:right;padding-left:2px;padding-right:6px;box-sizing:border-box;overflow:hidden;">52,923</div>
<div class="a t" style="left:383px;top:429px;width:79px;height:20px;font-size:13.5px;line-height:20px;color:#000;text-align:left;padding-left:7px;padding-right:3px;box-sizing:border-box;overflow:hidden;">$</div>
<div class="a t" style="left:383px;top:429px;width:79px;height:20px;font-size:13.5px;line-height:20px;color:#000;text-align:right;padding-left:2px;padding-right:6px;box-sizing:border-box;overflow:hidden;">62,673</div>
<div class="a t" style="left:463px;top:429px;width:79px;height:20px;font-size:13.5px;line-height:20px;color:#000;text-align:left;padding-left:7px;padding-right:3px;box-sizing:border-box;overflow:hidden;">$</div>
<div class="a t" style="left:463px;top:429px;width:79px;height:20px;font-size:13.5px;line-height:20px;color:#000;text-align:right;padding-left:2px;padding-right:6px;box-sizing:border-box;overflow:hidden;">63,635</div>
<div class="a t" style="left:543px;top:429px;width:84px;height:20px;font-size:13.5px;line-height:20px;color:#000;text-align:left;padding-left:7px;padding-right:3px;box-sizing:border-box;overflow:hidden;">$</div>
<div class="a t" style="left:543px;top:429px;width:84px;height:20px;font-size:13.5px;line-height:20px;color:#000;text-align:right;padding-left:2px;padding-right:6px;box-sizing:border-box;overflow:hidden;">57,410</div>
<div class="a t" style="left:628px;top:429px;width:86px;height:20px;font-size:13.5px;line-height:20px;color:#000;text-align:left;padding-left:7px;padding-right:3px;box-sizing:border-box;overflow:hidden;">$</div>
<div class="a t" style="left:628px;top:429px;width:86px;height:20px;font-size:13.5px;line-height:20px;color:#000;text-align:right;padding-left:2px;padding-right:6px;box-sizing:border-box;overflow:hidden;">236,641</div>
<div class="a t" style="left:715px;top:429px;width:86px;height:20px;font-size:14px;line-height:20px;color:#000;text-align:left;padding-left:2px;padding-right:3px;box-sizing:border-box;overflow:hidden;">Domestic</div>
<div class="a t" style="left:802px;top:429px;width:86px;height:20px;font-size:13.5px;line-height:20px;color:#000;text-align:left;padding-left:7px;padding-right:3px;box-sizing:border-box;overflow:hidden;">$</div>
<div class="a t" style="left:802px;top:429px;width:86px;height:20px;font-size:13.5px;line-height:20px;color:#000;text-align:right;padding-left:2px;padding-right:6px;box-sizing:border-box;overflow:hidden;">7,099.23</div>
<div class="a t" style="left:43px;top:449px;width:69px;height:20px;font-size:14px;line-height:20px;color:#000;text-align:left;padding-left:2px;padding-right:3px;box-sizing:border-box;overflow:hidden;">Mark</div>
<div class="a t" style="left:113px;top:449px;width:84px;height:20px;font-size:13.5px;line-height:20px;color:#000;text-align:right;padding-left:2px;padding-right:1px;box-sizing:border-box;overflow:hidden;">11/3/2009</div>
<div class="a t" style="left:198px;top:449px;width:84px;height:20px;font-size:13.5px;line-height:20px;color:#000;text-align:right;padding-left:2px;padding-right:6px;box-sizing:border-box;overflow:hidden;">8.2</div>
<div class="a t" style="left:283px;top:449px;width:99px;height:20px;font-size:13.5px;line-height:20px;color:#000;text-align:left;padding-left:7px;padding-right:3px;box-sizing:border-box;overflow:hidden;">$</div>
<div class="a t" style="left:283px;top:449px;width:99px;height:20px;font-size:13.5px;line-height:20px;color:#000;text-align:right;padding-left:2px;padding-right:6px;box-sizing:border-box;overflow:hidden;">59,678</div>
<div class="a t" style="left:383px;top:449px;width:79px;height:20px;font-size:13.5px;line-height:20px;color:#000;text-align:left;padding-left:7px;padding-right:3px;box-sizing:border-box;overflow:hidden;">$</div>
<div class="a t" style="left:383px;top:449px;width:79px;height:20px;font-size:13.5px;line-height:20px;color:#000;text-align:right;padding-left:2px;padding-right:6px;box-sizing:border-box;overflow:hidden;">70,934</div>
<div class="a t" style="left:463px;top:449px;width:79px;height:20px;font-size:13.5px;line-height:20px;color:#000;text-align:left;padding-left:7px;padding-right:3px;box-sizing:border-box;overflow:hidden;">$</div>
<div class="a t" style="left:463px;top:449px;width:79px;height:20px;font-size:13.5px;line-height:20px;color:#000;text-align:right;padding-left:2px;padding-right:6px;box-sizing:border-box;overflow:hidden;">78,410</div>
<div class="a t" style="left:543px;top:449px;width:84px;height:20px;font-size:13.5px;line-height:20px;color:#000;text-align:left;padding-left:7px;padding-right:3px;box-sizing:border-box;overflow:hidden;">$</div>
<div class="a t" style="left:543px;top:449px;width:84px;height:20px;font-size:13.5px;line-height:20px;color:#000;text-align:right;padding-left:2px;padding-right:6px;box-sizing:border-box;overflow:hidden;">32,994</div>
<div class="a t" style="left:628px;top:449px;width:86px;height:20px;font-size:13.5px;line-height:20px;color:#000;text-align:left;padding-left:7px;padding-right:3px;box-sizing:border-box;overflow:hidden;">$</div>
<div class="a t" style="left:628px;top:449px;width:86px;height:20px;font-size:13.5px;line-height:20px;color:#000;text-align:right;padding-left:2px;padding-right:6px;box-sizing:border-box;overflow:hidden;">242,016</div>
<div class="a t" style="left:715px;top:449px;width:86px;height:20px;font-size:14px;line-height:20px;color:#000;text-align:left;padding-left:2px;padding-right:3px;box-sizing:border-box;overflow:hidden;">Domestic</div>
<div class="a t" style="left:802px;top:449px;width:86px;height:20px;font-size:13.5px;line-height:20px;color:#000;text-align:left;padding-left:7px;padding-right:3px;box-sizing:border-box;overflow:hidden;">$</div>
<div class="a t" style="left:802px;top:449px;width:86px;height:20px;font-size:13.5px;line-height:20px;color:#000;text-align:right;padding-left:2px;padding-right:6px;box-sizing:border-box;overflow:hidden;">7,260.48</div>
<div class="a t" style="left:43px;top:469px;width:69px;height:20px;font-size:14px;line-height:20px;color:#000;text-align:left;padding-left:2px;padding-right:3px;box-sizing:border-box;overflow:hidden;">Swathi</div>
<div class="a t" style="left:113px;top:469px;width:84px;height:20px;font-size:13.5px;line-height:20px;color:#000;text-align:right;padding-left:2px;padding-right:1px;box-sizing:border-box;overflow:hidden;">8/4/2010</div>
<div class="a t" style="left:198px;top:469px;width:84px;height:20px;font-size:13.5px;line-height:20px;color:#000;text-align:right;padding-left:2px;padding-right:6px;box-sizing:border-box;overflow:hidden;">7.5</div>
<div class="a t" style="left:283px;top:469px;width:99px;height:20px;font-size:13.5px;line-height:20px;color:#000;text-align:left;padding-left:7px;padding-right:3px;box-sizing:border-box;overflow:hidden;">$</div>
<div class="a t" style="left:283px;top:469px;width:99px;height:20px;font-size:13.5px;line-height:20px;color:#000;text-align:right;padding-left:2px;padding-right:6px;box-sizing:border-box;overflow:hidden;">66,385</div>
<div class="a t" style="left:383px;top:469px;width:79px;height:20px;font-size:13.5px;line-height:20px;color:#000;text-align:left;padding-left:7px;padding-right:3px;box-sizing:border-box;overflow:hidden;">$</div>
<div class="a t" style="left:383px;top:469px;width:79px;height:20px;font-size:13.5px;line-height:20px;color:#000;text-align:right;padding-left:2px;padding-right:6px;box-sizing:border-box;overflow:hidden;">74,270</div>
<div class="a t" style="left:463px;top:469px;width:79px;height:20px;font-size:13.5px;line-height:20px;color:#000;text-align:left;padding-left:7px;padding-right:3px;box-sizing:border-box;overflow:hidden;">$</div>
<div class="a t" style="left:463px;top:469px;width:79px;height:20px;font-size:13.5px;line-height:20px;color:#000;text-align:right;padding-left:2px;padding-right:6px;box-sizing:border-box;overflow:hidden;">36,165</div>
<div class="a t" style="left:543px;top:469px;width:84px;height:20px;font-size:13.5px;line-height:20px;color:#000;text-align:left;padding-left:7px;padding-right:3px;box-sizing:border-box;overflow:hidden;">$</div>
<div class="a t" style="left:543px;top:469px;width:84px;height:20px;font-size:13.5px;line-height:20px;color:#000;text-align:right;padding-left:2px;padding-right:6px;box-sizing:border-box;overflow:hidden;">76,548</div>
<div class="a t" style="left:628px;top:469px;width:86px;height:20px;font-size:13.5px;line-height:20px;color:#000;text-align:left;padding-left:7px;padding-right:3px;box-sizing:border-box;overflow:hidden;">$</div>
<div class="a t" style="left:628px;top:469px;width:86px;height:20px;font-size:13.5px;line-height:20px;color:#000;text-align:right;padding-left:2px;padding-right:6px;box-sizing:border-box;overflow:hidden;">253,368</div>
<div class="a t" style="left:715px;top:469px;width:86px;height:20px;font-size:14px;line-height:20px;color:#000;text-align:left;padding-left:2px;padding-right:3px;box-sizing:border-box;overflow:hidden;">Domestic</div>
<div class="a t" style="left:802px;top:469px;width:86px;height:20px;font-size:13.5px;line-height:20px;color:#000;text-align:left;padding-left:7px;padding-right:3px;box-sizing:border-box;overflow:hidden;">$</div>
<div class="a t" style="left:802px;top:469px;width:86px;height:20px;font-size:13.5px;line-height:20px;color:#000;text-align:right;padding-left:2px;padding-right:6px;box-sizing:border-box;overflow:hidden;">7,601.04</div>
<div class="a t" style="left:43px;top:489px;width:69px;height:20px;font-size:14px;line-height:20px;color:#000;text-align:left;padding-left:2px;padding-right:3px;box-sizing:border-box;overflow:hidden;">Mike</div>
<div class="a t" style="left:113px;top:489px;width:84px;height:20px;font-size:13.5px;line-height:20px;color:#000;text-align:right;padding-left:2px;padding-right:1px;box-sizing:border-box;overflow:hidden;">6/9/2009</div>
<div class="a t" style="left:198px;top:489px;width:84px;height:20px;font-size:13.5px;line-height:20px;color:#000;text-align:right;padding-left:2px;padding-right:6px;box-sizing:border-box;overflow:hidden;">8.6</div>
<div class="a t" style="left:283px;top:489px;width:99px;height:20px;font-size:13.5px;line-height:20px;color:#000;text-align:left;padding-left:7px;padding-right:3px;box-sizing:border-box;overflow:hidden;">$</div>
<div class="a t" style="left:283px;top:489px;width:99px;height:20px;font-size:13.5px;line-height:20px;color:#000;text-align:right;padding-left:2px;padding-right:6px;box-sizing:border-box;overflow:hidden;">66,936</div>
<div class="a t" style="left:383px;top:489px;width:79px;height:20px;font-size:13.5px;line-height:20px;color:#000;text-align:left;padding-left:7px;padding-right:3px;box-sizing:border-box;overflow:hidden;">$</div>
<div class="a t" style="left:383px;top:489px;width:79px;height:20px;font-size:13.5px;line-height:20px;color:#000;text-align:right;padding-left:2px;padding-right:6px;box-sizing:border-box;overflow:hidden;">72,838</div>
<div class="a t" style="left:463px;top:489px;width:79px;height:20px;font-size:13.5px;line-height:20px;color:#000;text-align:left;padding-left:7px;padding-right:3px;box-sizing:border-box;overflow:hidden;">$</div>
<div class="a t" style="left:463px;top:489px;width:79px;height:20px;font-size:13.5px;line-height:20px;color:#000;text-align:right;padding-left:2px;padding-right:6px;box-sizing:border-box;overflow:hidden;">60,479</div>
<div class="a t" style="left:543px;top:489px;width:84px;height:20px;font-size:13.5px;line-height:20px;color:#000;text-align:left;padding-left:7px;padding-right:3px;box-sizing:border-box;overflow:hidden;">$</div>
<div class="a t" style="left:543px;top:489px;width:84px;height:20px;font-size:13.5px;line-height:20px;color:#000;text-align:right;padding-left:2px;padding-right:6px;box-sizing:border-box;overflow:hidden;">63,324</div>
<div class="a t" style="left:628px;top:489px;width:86px;height:20px;font-size:13.5px;line-height:20px;color:#000;text-align:left;padding-left:7px;padding-right:3px;box-sizing:border-box;overflow:hidden;">$</div>
<div class="a t" style="left:628px;top:489px;width:86px;height:20px;font-size:13.5px;line-height:20px;color:#000;text-align:right;padding-left:2px;padding-right:6px;box-sizing:border-box;overflow:hidden;">263,577</div>
<div class="a t" style="left:715px;top:489px;width:86px;height:20px;font-size:14px;line-height:20px;color:#000;text-align:left;padding-left:2px;padding-right:3px;box-sizing:border-box;overflow:hidden;">Domestic</div>
<div class="a t" style="left:802px;top:489px;width:86px;height:20px;font-size:13.5px;line-height:20px;color:#000;text-align:left;padding-left:7px;padding-right:3px;box-sizing:border-box;overflow:hidden;">$</div>
<div class="a t" style="left:802px;top:489px;width:86px;height:20px;font-size:13.5px;line-height:20px;color:#000;text-align:right;padding-left:2px;padding-right:6px;box-sizing:border-box;overflow:hidden;">7,907.31</div>
<div class="a t" style="left:43px;top:509px;width:69px;height:20px;font-size:14px;line-height:20px;color:#000;text-align:left;padding-left:2px;padding-right:3px;box-sizing:border-box;overflow:hidden;">Rick</div>
<div class="a t" style="left:113px;top:509px;width:84px;height:20px;font-size:13.5px;line-height:20px;color:#000;text-align:right;padding-left:2px;padding-right:1px;box-sizing:border-box;overflow:hidden;">4/16/2012</div>
<div class="a t" style="left:198px;top:509px;width:84px;height:20px;font-size:13.5px;line-height:20px;color:#000;text-align:right;padding-left:2px;padding-right:6px;box-sizing:border-box;overflow:hidden;">5.8</div>
<div class="a t" style="left:283px;top:509px;width:99px;height:20px;font-size:13.5px;line-height:20px;color:#000;text-align:left;padding-left:7px;padding-right:3px;box-sizing:border-box;overflow:hidden;">$</div>
<div class="a t" style="left:283px;top:509px;width:99px;height:20px;font-size:13.5px;line-height:20px;color:#000;text-align:right;padding-left:2px;padding-right:6px;box-sizing:border-box;overflow:hidden;">74,507</div>
<div class="a t" style="left:383px;top:509px;width:79px;height:20px;font-size:13.5px;line-height:20px;color:#000;text-align:left;padding-left:7px;padding-right:3px;box-sizing:border-box;overflow:hidden;">$</div>
<div class="a t" style="left:383px;top:509px;width:79px;height:20px;font-size:13.5px;line-height:20px;color:#000;text-align:right;padding-left:2px;padding-right:6px;box-sizing:border-box;overflow:hidden;">94,178</div>
<div class="a t" style="left:463px;top:509px;width:79px;height:20px;font-size:13.5px;line-height:20px;color:#000;text-align:left;padding-left:7px;padding-right:3px;box-sizing:border-box;overflow:hidden;">$</div>
<div class="a t" style="left:463px;top:509px;width:79px;height:20px;font-size:13.5px;line-height:20px;color:#000;text-align:right;padding-left:2px;padding-right:6px;box-sizing:border-box;overflow:hidden;">41,391</div>
<div class="a t" style="left:543px;top:509px;width:84px;height:20px;font-size:13.5px;line-height:20px;color:#000;text-align:left;padding-left:7px;padding-right:3px;box-sizing:border-box;overflow:hidden;">$</div>
<div class="a t" style="left:543px;top:509px;width:84px;height:20px;font-size:13.5px;line-height:20px;color:#000;text-align:right;padding-left:2px;padding-right:6px;box-sizing:border-box;overflow:hidden;">27,235</div>
<div class="a t" style="left:628px;top:509px;width:86px;height:20px;font-size:13.5px;line-height:20px;color:#000;text-align:left;padding-left:7px;padding-right:3px;box-sizing:border-box;overflow:hidden;">$</div>
<div class="a t" style="left:628px;top:509px;width:86px;height:20px;font-size:13.5px;line-height:20px;color:#000;text-align:right;padding-left:2px;padding-right:6px;box-sizing:border-box;overflow:hidden;">237,311</div>
<div class="a t" style="left:715px;top:509px;width:86px;height:20px;font-size:14px;line-height:20px;color:#000;text-align:left;padding-left:2px;padding-right:3px;box-sizing:border-box;overflow:hidden;">Domestic</div>
<div class="a t" style="left:802px;top:509px;width:86px;height:20px;font-size:13.5px;line-height:20px;color:#000;text-align:left;padding-left:7px;padding-right:3px;box-sizing:border-box;overflow:hidden;">$</div>
<div class="a t" style="left:802px;top:509px;width:86px;height:20px;font-size:13.5px;line-height:20px;color:#000;text-align:right;padding-left:2px;padding-right:6px;box-sizing:border-box;overflow:hidden;">7,119.33</div>
<div class="a t" style="left:43px;top:529px;width:69px;height:20px;font-size:14px;line-height:20px;color:#000;text-align:left;padding-left:2px;padding-right:3px;box-sizing:border-box;overflow:hidden;">Jill</div>
<div class="a t" style="left:113px;top:529px;width:84px;height:20px;font-size:13.5px;line-height:20px;color:#000;text-align:right;padding-left:2px;padding-right:1px;box-sizing:border-box;overflow:hidden;">1/7/2009</div>
<div class="a t" style="left:198px;top:529px;width:84px;height:20px;font-size:13.5px;line-height:20px;color:#000;text-align:right;padding-left:2px;padding-right:6px;box-sizing:border-box;overflow:hidden;">9.1</div>
<div class="a t" style="left:283px;top:529px;width:99px;height:20px;font-size:13.5px;line-height:20px;color:#000;text-align:left;padding-left:7px;padding-right:3px;box-sizing:border-box;overflow:hidden;">$</div>
<div class="a t" style="left:283px;top:529px;width:99px;height:20px;font-size:13.5px;line-height:20px;color:#000;text-align:right;padding-left:2px;padding-right:6px;box-sizing:border-box;overflow:hidden;">76,889</div>
<div class="a t" style="left:383px;top:529px;width:79px;height:20px;font-size:13.5px;line-height:20px;color:#000;text-align:left;padding-left:7px;padding-right:3px;box-sizing:border-box;overflow:hidden;">$</div>
<div class="a t" style="left:383px;top:529px;width:79px;height:20px;font-size:13.5px;line-height:20px;color:#000;text-align:right;padding-left:2px;padding-right:6px;box-sizing:border-box;overflow:hidden;">49,266</div>
<div class="a t" style="left:463px;top:529px;width:79px;height:20px;font-size:13.5px;line-height:20px;color:#000;text-align:left;padding-left:7px;padding-right:3px;box-sizing:border-box;overflow:hidden;">$</div>
<div class="a t" style="left:463px;top:529px;width:79px;height:20px;font-size:13.5px;line-height:20px;color:#000;text-align:right;padding-left:2px;padding-right:6px;box-sizing:border-box;overflow:hidden;">64,225</div>
<div class="a t" style="left:543px;top:529px;width:84px;height:20px;font-size:13.5px;line-height:20px;color:#000;text-align:left;padding-left:7px;padding-right:3px;box-sizing:border-box;overflow:hidden;">$</div>
<div class="a t" style="left:543px;top:529px;width:84px;height:20px;font-size:13.5px;line-height:20px;color:#000;text-align:right;padding-left:2px;padding-right:6px;box-sizing:border-box;overflow:hidden;">55,410</div>
<div class="a t" style="left:628px;top:529px;width:86px;height:20px;font-size:13.5px;line-height:20px;color:#000;text-align:left;padding-left:7px;padding-right:3px;box-sizing:border-box;overflow:hidden;">$</div>
<div class="a t" style="left:628px;top:529px;width:86px;height:20px;font-size:13.5px;line-height:20px;color:#000;text-align:right;padding-left:2px;padding-right:6px;box-sizing:border-box;overflow:hidden;">245,790</div>
<div class="a t" style="left:715px;top:529px;width:86px;height:20px;font-size:14px;line-height:20px;color:#000;text-align:left;padding-left:2px;padding-right:3px;box-sizing:border-box;overflow:hidden;">Domestic</div>
<div class="a t" style="left:802px;top:529px;width:86px;height:20px;font-size:13.5px;line-height:20px;color:#000;text-align:left;padding-left:7px;padding-right:3px;box-sizing:border-box;overflow:hidden;">$</div>
<div class="a t" style="left:802px;top:529px;width:86px;height:20px;font-size:13.5px;line-height:20px;color:#000;text-align:right;padding-left:2px;padding-right:6px;box-sizing:border-box;overflow:hidden;">7,373.70</div>
<div class="a t" style="left:43px;top:549px;width:69px;height:20px;font-size:14px;line-height:20px;color:#000;text-align:left;padding-left:2px;padding-right:3px;box-sizing:border-box;overflow:hidden;">Rich</div>
<div class="a t" style="left:113px;top:549px;width:84px;height:20px;font-size:13.5px;line-height:20px;color:#000;text-align:right;padding-left:2px;padding-right:1px;box-sizing:border-box;overflow:hidden;">3/25/2014</div>
<div class="a t" style="left:198px;top:549px;width:84px;height:20px;font-size:13.5px;line-height:20px;color:#000;text-align:right;padding-left:2px;padding-right:6px;box-sizing:border-box;overflow:hidden;">3.9</div>
<div class="a t" style="left:283px;top:549px;width:99px;height:20px;font-size:13.5px;line-height:20px;color:#000;text-align:left;padding-left:7px;padding-right:3px;box-sizing:border-box;overflow:hidden;">$</div>
<div class="a t" style="left:283px;top:549px;width:99px;height:20px;font-size:13.5px;line-height:20px;color:#000;text-align:right;padding-left:2px;padding-right:6px;box-sizing:border-box;overflow:hidden;">90,515</div>
<div class="a t" style="left:383px;top:549px;width:79px;height:20px;font-size:13.5px;line-height:20px;color:#000;text-align:left;padding-left:7px;padding-right:3px;box-sizing:border-box;overflow:hidden;">$</div>
<div class="a t" style="left:383px;top:549px;width:79px;height:20px;font-size:13.5px;line-height:20px;color:#000;text-align:right;padding-left:2px;padding-right:6px;box-sizing:border-box;overflow:hidden;">29,238</div>
<div class="a t" style="left:463px;top:549px;width:79px;height:20px;font-size:13.5px;line-height:20px;color:#000;text-align:left;padding-left:7px;padding-right:3px;box-sizing:border-box;overflow:hidden;">$</div>
<div class="a t" style="left:463px;top:549px;width:79px;height:20px;font-size:13.5px;line-height:20px;color:#000;text-align:right;padding-left:2px;padding-right:6px;box-sizing:border-box;overflow:hidden;">30,973</div>
<div class="a t" style="left:543px;top:549px;width:84px;height:20px;font-size:13.5px;line-height:20px;color:#000;text-align:left;padding-left:7px;padding-right:3px;box-sizing:border-box;overflow:hidden;">$</div>
<div class="a t" style="left:543px;top:549px;width:84px;height:20px;font-size:13.5px;line-height:20px;color:#000;text-align:right;padding-left:2px;padding-right:6px;box-sizing:border-box;overflow:hidden;">32,145</div>
<div class="a t" style="left:628px;top:549px;width:86px;height:20px;font-size:13.5px;line-height:20px;color:#000;text-align:left;padding-left:7px;padding-right:3px;box-sizing:border-box;overflow:hidden;">$</div>
<div class="a t" style="left:628px;top:549px;width:86px;height:20px;font-size:13.5px;line-height:20px;color:#000;text-align:right;padding-left:2px;padding-right:6px;box-sizing:border-box;overflow:hidden;">182,871</div>
<div class="a t" style="left:715px;top:549px;width:86px;height:20px;font-size:14px;line-height:20px;color:#000;text-align:left;padding-left:2px;padding-right:3px;box-sizing:border-box;overflow:hidden;">Domestic</div>
<div class="a t" style="left:802px;top:549px;width:86px;height:20px;font-size:13.5px;line-height:20px;color:#000;text-align:left;padding-left:7px;padding-right:3px;box-sizing:border-box;overflow:hidden;">$</div>
<div class="a t" style="left:802px;top:549px;width:86px;height:20px;font-size:13.5px;line-height:20px;color:#000;text-align:right;padding-left:2px;padding-right:20px;box-sizing:border-box;overflow:hidden;">-</div>
<div class="a t" style="left:43px;top:569px;width:69px;height:20px;font-size:14px;line-height:20px;color:#000;text-align:left;padding-left:2px;padding-right:3px;box-sizing:border-box;overflow:hidden;">Daryl</div>
<div class="a t" style="left:113px;top:569px;width:84px;height:20px;font-size:13.5px;line-height:20px;color:#000;text-align:right;padding-left:2px;padding-right:1px;box-sizing:border-box;overflow:hidden;">8/15/2011</div>
<div class="a t" style="left:198px;top:569px;width:84px;height:20px;font-size:13.5px;line-height:20px;color:#000;text-align:right;padding-left:2px;padding-right:6px;box-sizing:border-box;overflow:hidden;">6.5</div>
<div class="a t" style="left:283px;top:569px;width:99px;height:20px;font-size:13.5px;line-height:20px;color:#000;text-align:left;padding-left:7px;padding-right:3px;box-sizing:border-box;overflow:hidden;">$</div>
<div class="a t" style="left:283px;top:569px;width:99px;height:20px;font-size:13.5px;line-height:20px;color:#000;text-align:right;padding-left:2px;padding-right:6px;box-sizing:border-box;overflow:hidden;">97,426</div>
<div class="a t" style="left:383px;top:569px;width:79px;height:20px;font-size:13.5px;line-height:20px;color:#000;text-align:left;padding-left:7px;padding-right:3px;box-sizing:border-box;overflow:hidden;">$</div>
<div class="a t" style="left:383px;top:569px;width:79px;height:20px;font-size:13.5px;line-height:20px;color:#000;text-align:right;padding-left:2px;padding-right:6px;box-sizing:border-box;overflow:hidden;">43,061</div>
<div class="a t" style="left:463px;top:569px;width:79px;height:20px;font-size:13.5px;line-height:20px;color:#000;text-align:left;padding-left:7px;padding-right:3px;box-sizing:border-box;overflow:hidden;">$</div>
<div class="a t" style="left:463px;top:569px;width:79px;height:20px;font-size:13.5px;line-height:20px;color:#000;text-align:right;padding-left:2px;padding-right:6px;box-sizing:border-box;overflow:hidden;">26,122</div>
<div class="a t" style="left:543px;top:569px;width:84px;height:20px;font-size:13.5px;line-height:20px;color:#000;text-align:left;padding-left:7px;padding-right:3px;box-sizing:border-box;overflow:hidden;">$</div>
<div class="a t" style="left:543px;top:569px;width:84px;height:20px;font-size:13.5px;line-height:20px;color:#000;text-align:right;padding-left:2px;padding-right:6px;box-sizing:border-box;overflow:hidden;">83,391</div>
<div class="a t" style="left:628px;top:569px;width:86px;height:20px;font-size:13.5px;line-height:20px;color:#000;text-align:left;padding-left:7px;padding-right:3px;box-sizing:border-box;overflow:hidden;">$</div>
<div class="a t" style="left:628px;top:569px;width:86px;height:20px;font-size:13.5px;line-height:20px;color:#000;text-align:right;padding-left:2px;padding-right:6px;box-sizing:border-box;overflow:hidden;">250,000</div>
<div class="a t" style="left:715px;top:569px;width:86px;height:20px;font-size:14px;line-height:20px;color:#000;text-align:left;padding-left:2px;padding-right:3px;box-sizing:border-box;overflow:hidden;">Domestic</div>
<div class="a t" style="left:802px;top:569px;width:86px;height:20px;font-size:13.5px;line-height:20px;color:#000;text-align:left;padding-left:7px;padding-right:3px;box-sizing:border-box;overflow:hidden;">$</div>
<div class="a t" style="left:802px;top:569px;width:86px;height:20px;font-size:13.5px;line-height:20px;color:#000;text-align:right;padding-left:2px;padding-right:6px;box-sizing:border-box;overflow:hidden;">7,500.00</div>
<div class="a t" style="left:43px;top:589px;width:69px;height:20px;font-size:14px;line-height:20px;color:#000;text-align:left;padding-left:2px;padding-right:3px;box-sizing:border-box;overflow:hidden;">Erica</div>
<div class="a t" style="left:113px;top:589px;width:84px;height:20px;font-size:13.5px;line-height:20px;color:#000;text-align:right;padding-left:2px;padding-right:1px;box-sizing:border-box;overflow:hidden;">3/15/2013</div>
<div class="a t" style="left:198px;top:589px;width:84px;height:20px;font-size:13.5px;line-height:20px;color:#000;text-align:right;padding-left:2px;padding-right:6px;box-sizing:border-box;overflow:hidden;">4.9</div>
<div class="a t" style="left:283px;top:589px;width:99px;height:20px;font-size:13.5px;line-height:20px;color:#000;text-align:left;padding-left:7px;padding-right:3px;box-sizing:border-box;overflow:hidden;">$</div>
<div class="a t" style="left:283px;top:589px;width:99px;height:20px;font-size:13.5px;line-height:20px;color:#000;text-align:right;padding-left:2px;padding-right:6px;box-sizing:border-box;overflow:hidden;">98,094</div>
<div class="a t" style="left:383px;top:589px;width:79px;height:20px;font-size:13.5px;line-height:20px;color:#000;text-align:left;padding-left:7px;padding-right:3px;box-sizing:border-box;overflow:hidden;">$</div>
<div class="a t" style="left:383px;top:589px;width:79px;height:20px;font-size:13.5px;line-height:20px;color:#000;text-align:right;padding-left:2px;padding-right:6px;box-sizing:border-box;overflow:hidden;">47,398</div>
<div class="a t" style="left:463px;top:589px;width:79px;height:20px;font-size:13.5px;line-height:20px;color:#000;text-align:left;padding-left:7px;padding-right:3px;box-sizing:border-box;overflow:hidden;">$</div>
<div class="a t" style="left:463px;top:589px;width:79px;height:20px;font-size:13.5px;line-height:20px;color:#000;text-align:right;padding-left:2px;padding-right:6px;box-sizing:border-box;overflow:hidden;">80,755</div>
<div class="a t" style="left:543px;top:589px;width:84px;height:20px;font-size:13.5px;line-height:20px;color:#000;text-align:left;padding-left:7px;padding-right:3px;box-sizing:border-box;overflow:hidden;">$</div>
<div class="a t" style="left:543px;top:589px;width:84px;height:20px;font-size:13.5px;line-height:20px;color:#000;text-align:right;padding-left:2px;padding-right:6px;box-sizing:border-box;overflow:hidden;">40,446</div>
<div class="a t" style="left:628px;top:589px;width:86px;height:20px;font-size:13.5px;line-height:20px;color:#000;text-align:left;padding-left:7px;padding-right:3px;box-sizing:border-box;overflow:hidden;">$</div>
<div class="a t" style="left:628px;top:589px;width:86px;height:20px;font-size:13.5px;line-height:20px;color:#000;text-align:right;padding-left:2px;padding-right:6px;box-sizing:border-box;overflow:hidden;">266,693</div>
<div class="a t" style="left:715px;top:589px;width:86px;height:20px;font-size:14px;line-height:20px;color:#000;text-align:left;padding-left:2px;padding-right:3px;box-sizing:border-box;overflow:hidden;">International</div>
<div class="a t" style="left:802px;top:589px;width:86px;height:20px;font-size:13.5px;line-height:20px;color:#000;text-align:left;padding-left:7px;padding-right:3px;box-sizing:border-box;overflow:hidden;">$</div>
<div class="a t" style="left:802px;top:589px;width:86px;height:20px;font-size:13.5px;line-height:20px;color:#000;text-align:right;padding-left:2px;padding-right:6px;box-sizing:border-box;overflow:hidden;">13,334.65</div>
<div class="a" style="left:42px;top:347px;width:847px;height:1px;background:#000;"></div>
<div class="a" style="left:42px;top:367px;width:847px;height:1px;background:#000;"></div>
<div class="a" style="left:42px;top:387px;width:847px;height:1px;background:#000;"></div>
<div class="a" style="left:42px;top:407px;width:847px;height:1px;background:#000;"></div>
<div class="a" style="left:42px;top:427px;width:847px;height:1px;background:#000;"></div>
<div class="a" style="left:42px;top:447px;width:847px;height:1px;background:#000;"></div>
<div class="a" style="left:42px;top:467px;width:847px;height:1px;background:#000;"></div>
<div class="a" style="left:42px;top:487px;width:847px;height:1px;background:#000;"></div>
<div class="a" style="left:42px;top:507px;width:847px;height:1px;background:#000;"></div>
<div class="a" style="left:42px;top:527px;width:847px;height:1px;background:#000;"></div>
<div class="a" style="left:42px;top:547px;width:847px;height:1px;background:#000;"></div>
<div class="a" style="left:42px;top:567px;width:847px;height:1px;background:#000;"></div>
<div class="a" style="left:42px;top:587px;width:847px;height:1px;background:#000;"></div>
<div class="a" style="left:42px;top:607px;width:847px;height:1px;background:#000;"></div>
<div class="a" style="left:112px;top:347px;width:1px;height:261px;background:#000;"></div>
<div class="a" style="left:197px;top:347px;width:1px;height:261px;background:#000;"></div>
<div class="a" style="left:282px;top:347px;width:1px;height:261px;background:#000;"></div>
<div class="a" style="left:382px;top:347px;width:1px;height:261px;background:#000;"></div>
<div class="a" style="left:462px;top:347px;width:1px;height:261px;background:#000;"></div>
<div class="a" style="left:542px;top:347px;width:1px;height:261px;background:#000;"></div>
<div class="a" style="left:627px;top:347px;width:1px;height:261px;background:#000;"></div>
<div class="a" style="left:714px;top:347px;width:1px;height:261px;background:#000;"></div>
<div class="a" style="left:801px;top:347px;width:1px;height:261px;background:#000;"></div>
<div class="a" style="left:888px;top:347px;width:1px;height:261px;background:#000;"></div>
<div class="a" style="left:17px;top:175px;width:986px;height:19px;background:#e6e6e6;"></div>
<div class="a" style="left:17px;top:194px;width:986px;height:1px;background:#a0a0a0;"></div>
<div class="a" style="left:383px;top:175px;width:79px;height:18px;background:#d2d2d2;"></div>
<div class="a" style="left:382px;top:193px;width:81px;height:2px;background:#217346;"></div>
<div class="a t" style="left:43px;top:175px;width:69px;line-height:19px;font-size:12.3px;text-align:center;color:#262626">A</div>
<div class="a t" style="left:113px;top:175px;width:84px;line-height:19px;font-size:12.3px;text-align:center;color:#262626">B</div>
<div class="a t" style="left:198px;top:175px;width:84px;line-height:19px;font-size:12.3px;text-align:center;color:#262626">C</div>
<div class="a t" style="left:283px;top:175px;width:99px;line-height:19px;font-size:12.3px;text-align:center;color:#262626">D</div>
<div class="a t" style="left:383px;top:175px;width:79px;line-height:19px;font-size:12.3px;text-align:center;color:#1f5f3b">E</div>
<div class="a t" style="left:463px;top:175px;width:79px;line-height:19px;font-size:12.3px;text-align:center;color:#262626">F</div>
<div class="a t" style="left:543px;top:175px;width:84px;line-height:19px;font-size:12.3px;text-align:center;color:#262626">G</div>
<div class="a t" style="left:628px;top:175px;width:86px;line-height:19px;font-size:12.3px;text-align:center;color:#262626">H</div>
<div class="a t" style="left:715px;top:175px;width:86px;line-height:19px;font-size:12.3px;text-align:center;color:#262626">I</div>
<div class="a t" style="left:802px;top:175px;width:86px;line-height:19px;font-size:12.3px;text-align:center;color:#262626">J</div>
<div class="a t" style="left:889px;top:175px;width:70px;line-height:19px;font-size:12.3px;text-align:center;color:#262626">K</div>
<div class="a t" style="left:960px;top:175px;width:70px;line-height:19px;font-size:12.3px;text-align:center;color:#262626"> </div>
<div class="a" style="left:42px;top:176px;width:1px;height:18px;background:#a8a8a8;"></div>
<div class="a" style="left:112px;top:176px;width:1px;height:18px;background:#a8a8a8;"></div>
<div class="a" style="left:197px;top:176px;width:1px;height:18px;background:#a8a8a8;"></div>
<div class="a" style="left:282px;top:176px;width:1px;height:18px;background:#a8a8a8;"></div>
<div class="a" style="left:382px;top:176px;width:1px;height:18px;background:#a8a8a8;"></div>
<div class="a" style="left:462px;top:176px;width:1px;height:18px;background:#a8a8a8;"></div>
<div class="a" style="left:542px;top:176px;width:1px;height:18px;background:#a8a8a8;"></div>
<div class="a" style="left:627px;top:176px;width:1px;height:18px;background:#a8a8a8;"></div>
<div class="a" style="left:714px;top:176px;width:1px;height:18px;background:#a8a8a8;"></div>
<div class="a" style="left:801px;top:176px;width:1px;height:18px;background:#a8a8a8;"></div>
<div class="a" style="left:888px;top:176px;width:1px;height:18px;background:#a8a8a8;"></div>
<div class="a" style="left:959px;top:176px;width:1px;height:18px;background:#a8a8a8;"></div>
<svg class="a" style="left:0;top:0" width="60" height="200"><polygon points="27,191 39,179 39,191" fill="#b4b4b4"/></svg>
<div class="a" style="left:17px;top:195px;width:25px;height:570px;background:#e6e6e6;"></div>
<div class="a" style="left:42px;top:175px;width:1px;height:590px;background:#a0a0a0;"></div>
<div class="a" style="left:18px;top:256px;width:24px;height:20px;background:#d2d2d2;"></div>
<div class="a" style="left:41px;top:255px;width:2px;height:22px;background:#217346;"></div>
<div class="a t" style="left:18px;top:196px;width:24px;line-height:20px;font-size:12.3px;text-align:center;color:#262626">1</div>
<div class="a" style="left:17px;top:214px;width:25px;height:1px;background:#b4b4b4;"></div>
<div class="a t" style="left:18px;top:216px;width:24px;line-height:20px;font-size:12.3px;text-align:center;color:#262626">2</div>
<div class="a" style="left:17px;top:234px;width:25px;height:1px;background:#b4b4b4;"></div>
<div class="a t" style="left:18px;top:236px;width:24px;line-height:20px;font-size:12.3px;text-align:center;color:#262626">3</div>
<div class="a" style="left:17px;top:255px;width:25px;height:1px;background:#b4b4b4;"></div>
<div class="a t" style="left:18px;top:257px;width:24px;line-height:20px;font-size:12.3px;text-align:center;color:#1f5f3b">4</div>
<div class="a" style="left:17px;top:276px;width:25px;height:1px;background:#b4b4b4;"></div>
<div class="a t" style="left:18px;top:278px;width:24px;line-height:20px;font-size:12.3px;text-align:center;color:#262626">5</div>
<div class="a" style="left:17px;top:296px;width:25px;height:1px;background:#b4b4b4;"></div>
<div class="a t" style="left:18px;top:308px;width:24px;line-height:20px;font-size:12.3px;text-align:center;color:#262626">6</div>
<div class="a" style="left:17px;top:327px;width:25px;height:1px;background:#b4b4b4;"></div>
<div class="a t" style="left:18px;top:329px;width:24px;line-height:20px;font-size:12.3px;text-align:center;color:#262626">7</div>
<div class="a" style="left:17px;top:347px;width:25px;height:1px;background:#b4b4b4;"></div>
<div class="a t" style="left:18px;top:349px;width:24px;line-height:20px;font-size:12.3px;text-align:center;color:#262626">8</div>
<div class="a" style="left:17px;top:367px;width:25px;height:1px;background:#b4b4b4;"></div>
<div class="a t" style="left:18px;top:369px;width:24px;line-height:20px;font-size:12.3px;text-align:center;color:#262626">9</div>
<div class="a" style="left:17px;top:387px;width:25px;height:1px;background:#b4b4b4;"></div>
<div class="a t" style="left:18px;top:389px;width:24px;line-height:20px;font-size:12.3px;text-align:center;color:#262626">10</div>
<div class="a" style="left:17px;top:407px;width:25px;height:1px;background:#b4b4b4;"></div>
<div class="a t" style="left:18px;top:409px;width:24px;line-height:20px;font-size:12.3px;text-align:center;color:#262626">11</div>
<div class="a" style="left:17px;top:427px;width:25px;height:1px;background:#b4b4b4;"></div>
<div class="a t" style="left:18px;top:429px;width:24px;line-height:20px;font-size:12.3px;text-align:center;color:#262626">12</div>
<div class="a" style="left:17px;top:447px;width:25px;height:1px;background:#b4b4b4;"></div>
<div class="a t" style="left:18px;top:449px;width:24px;line-height:20px;font-size:12.3px;text-align:center;color:#262626">13</div>
<div class="a" style="left:17px;top:467px;width:25px;height:1px;background:#b4b4b4;"></div>
<div class="a t" style="left:18px;top:469px;width:24px;line-height:20px;font-size:12.3px;text-align:center;color:#262626">14</div>
<div class="a" style="left:17px;top:487px;width:25px;height:1px;background:#b4b4b4;"></div>
<div class="a t" style="left:18px;top:489px;width:24px;line-height:20px;font-size:12.3px;text-align:center;color:#262626">15</div>
<div class="a" style="left:17px;top:507px;width:25px;height:1px;background:#b4b4b4;"></div>
<div class="a t" style="left:18px;top:509px;width:24px;line-height:20px;font-size:12.3px;text-align:center;color:#262626">16</div>
<div class="a" style="left:17px;top:527px;width:25px;height:1px;background:#b4b4b4;"></div>
<div class="a t" style="left:18px;top:529px;width:24px;line-height:20px;font-size:12.3px;text-align:center;color:#262626">17</div>
<div class="a" style="left:17px;top:547px;width:25px;height:1px;background:#b4b4b4;"></div>
<div class="a t" style="left:18px;top:549px;width:24px;line-height:20px;font-size:12.3px;text-align:center;color:#262626">18</div>
<div class="a" style="left:17px;top:567px;width:25px;height:1px;background:#b4b4b4;"></div>
<div class="a t" style="left:18px;top:569px;width:24px;line-height:20px;font-size:12.3px;text-align:center;color:#262626">19</div>
<div class="a" style="left:17px;top:587px;width:25px;height:1px;background:#b4b4b4;"></div>
<div class="a t" style="left:18px;top:589px;width:24px;line-height:20px;font-size:12.3px;text-align:center;color:#262626">20</div>
<div class="a" style="left:17px;top:607px;width:25px;height:1px;background:#b4b4b4;"></div>
<div class="a t" style="left:18px;top:609px;width:24px;line-height:20px;font-size:12.3px;text-align:center;color:#262626">21</div>
<div class="a" style="left:17px;top:627px;width:25px;height:1px;background:#b4b4b4;"></div>
<div class="a t" style="left:18px;top:629px;width:24px;line-height:20px;font-size:12.3px;text-align:center;color:#262626">22</div>
<div class="a" style="left:17px;top:647px;width:25px;height:1px;background:#b4b4b4;"></div>
<div class="a t" style="left:18px;top:649px;width:24px;line-height:20px;font-size:12.3px;text-align:center;color:#262626">23</div>
<div class="a" style="left:17px;top:667px;width:25px;height:1px;background:#b4b4b4;"></div>
<div class="a t" style="left:18px;top:669px;width:24px;line-height:20px;font-size:12.3px;text-align:center;color:#262626">24</div>
<div class="a" style="left:17px;top:687px;width:25px;height:1px;background:#b4b4b4;"></div>
<div class="a t" style="left:18px;top:689px;width:24px;line-height:20px;font-size:12.3px;text-align:center;color:#262626">25</div>
<div class="a" style="left:17px;top:707px;width:25px;height:1px;background:#b4b4b4;"></div>
<div class="a t" style="left:18px;top:709px;width:24px;line-height:20px;font-size:12.3px;text-align:center;color:#262626">26</div>
<div class="a" style="left:17px;top:727px;width:25px;height:1px;background:#b4b4b4;"></div>
<div class="a t" style="left:18px;top:729px;width:24px;line-height:20px;font-size:12.3px;text-align:center;color:#262626">27</div>
<div class="a" style="left:17px;top:747px;width:25px;height:1px;background:#b4b4b4;"></div>
<div class="a t" style="left:18px;top:749px;width:24px;line-height:20px;font-size:12.3px;text-align:center;color:#262626">28</div>
<div class="a" style="left:383px;top:256px;width:77px;height:18px;border:1px solid #fff"></div>
<div class="a" style="left:381px;top:254px;width:83px;height:2px;background:#217346;"></div>
<div class="a" style="left:381px;top:276px;width:83px;height:2px;background:#217346;"></div>
<div class="a" style="left:381px;top:254px;width:2px;height:24px;background:#217346;"></div>
<div class="a" style="left:462px;top:254px;width:2px;height:24px;background:#217346;"></div>
<div class="a" style="left:459px;top:273px;width:5px;height:5px;background:#217346;border:1px solid #fff;"></div>

<!-- sheet tabs -->
<div class="a" style="left:17px;top:765px;width:986px;height:28px;background:#e6e6e6"></div>
<div class="a" style="left:17px;top:765px;width:986px;height:1px;background:#a8a8a8"></div>
<svg class="a" style="left:43px;top:774px" width="6" height="9"><path d="M5 0v8l-4.5-4z" fill="#b4b4b4"/></svg>
<svg class="a" style="left:72px;top:774px" width="6" height="9"><path d="M0.5 0v8l4.5-4z" fill="#b4b4b4"/></svg>
<div class="a" style="left:117px;top:765px;width:56px;height:24px;background:#fff;border-left:1px solid #a8a8a8;border-right:1px solid #a8a8a8;box-sizing:border-box"></div>
<div class="a" style="left:117px;top:788px;width:56px;height:2px;background:#217346"></div>
<div class="a t" style="left:117px;top:771px;width:55px;text-align:center;font-size:13px;line-height:16px;font-weight:bold;color:#217346">Sales</div>
<div class="a t" style="left:185px;top:771px;font-size:12.7px;line-height:16px;color:#444">Database</div>
<div class="a" style="left:253px;top:769px;width:1px;height:20px;background:#bdbdbd"></div>
<div class="a t" style="left:267px;top:771px;font-size:13px;line-height:16px;color:#444">Addition</div>
<div class="a" style="left:330px;top:769px;width:1px;height:20px;background:#bdbdbd"></div>
<svg class="a" style="left:363px;top:770px" width="17" height="17"><circle cx="8.8" cy="8.8" r="7.2" fill="none" stroke="#6e6e6e" stroke-width="1.2"/><path d="M8.8 4.8v8M4.8 8.8h8" stroke="#5e5e5e" stroke-width="2"/></svg>
<svg class="a" style="left:946px;top:772px" width="4" height="13"><circle cx="2" cy="2" r="1" fill="#999"/><circle cx="2" cy="6.5" r="1" fill="#999"/><circle cx="2" cy="11" r="1" fill="#999"/></svg>
<div class="a" style="left:964px;top:772px;width:15px;height:15px;background:#fff;border:1px solid #ababab;box-sizing:border-box"></div>
<svg class="a" style="left:968px;top:775px" width="6" height="9"><path d="M5 0v8l-4.5-4z" fill="#555"/></svg>
<div class="a" style="left:979px;top:772px;width:30px;height:15px;background:#fff;border:1px solid #ababab;box-sizing:border-box"></div>

<!-- status bar -->
<div class="a" style="left:17px;top:793px;width:986px;height:21px;background:#f1f1f1"></div>
<div class="a" style="left:17px;top:793px;width:986px;height:1px;background:#d4d4d4"></div>
<div class="a t" style="left:25px;top:796px;font-size:11px;line-height:14px;color:#444">Ready</div>

<div class="a" style="left:17px;top:35px;width:1px;height:780px;background:#e0f3e6"></div>
<!-- taskbar -->
<div class="a" style="left:0;top:816px;width:1003px;height:1px;background:#a0a6a3"></div>
<div class="a" style="left:0;top:817px;width:1003px;height:1px;background:#111"></div>
<div class="a" style="left:0;top:818px;width:1003px;height:39px;background:#202020"></div>
<div class="a" style="left:0;top:817px;width:12px;height:40px;background:#020506"></div>
<div class="a" style="left:12px;top:817px;width:33px;height:40px;background:#0b0b0b"></div>
<svg class="a" style="left:12px;top:820px" width="34" height="34"><g transform="translate(16.7 16.3)"><g fill="#a6a6a6">
<circle r="11"/>
<rect x="-3" y="-15.5" width="6" height="31" rx="1"/>
<rect x="-3" y="-15.5" width="6" height="31" rx="1" transform="rotate(45)"/>
<rect x="-3" y="-15.5" width="6" height="31" rx="1" transform="rotate(90)"/>
<rect x="-3" y="-15.5" width="6" height="31" rx="1" transform="rotate(135)"/>
</g><circle r="6.6" fill="#0b0b0b"/></g></svg>
<div class="a" style="left:45px;top:817px;width:16px;height:40px;background:#2e2e2e"></div>
<svg class="a" style="left:45px;top:817px" width="16" height="39"><path d="M16 10.5 a9 9 0 0 0 0 17" stroke="#fff" stroke-width="2.2" fill="none"/></svg>
<div class="a" style="left:61px;top:817px;width:48px;height:40px;background:#1f1f1f"></div>
<svg class="a" style="left:76px;top:828px" width="18" height="18"><path d="M0 2.3 L7.3 1.3 V8.4 H0z M8.3 1.1 L17 0 V8.4 H8.3z M0 9.4 H7.3 V16.5 L0 15.5z M8.3 9.4 H17 V17.5 L8.3 16.4z" fill="#fff"/></svg>
<div class="a" style="left:109px;top:817px;width:280px;height:40px;background:#333333"></div>
<div class="a t" style="left:108px;top:828px;font-size:14.4px;line-height:18px;color:#c4c4c4">e here to search</div>
<svg class="a" style="left:361px;top:827px" width="14" height="20"><rect x="4" y="1" width="6" height="11" rx="3" fill="none" stroke="#bbb" stroke-width="1.3"/><path d="M1.5 9a5.5 5.5 0 0 0 11 0M7 14.5v3M3.5 17.8h7" stroke="#bbb" stroke-width="1.3" fill="none"/></svg>
<svg class="a" style="left:402px;top:830px" width="23" height="15"><rect x="5" y="1" width="13" height="13" fill="none" stroke="#fff" stroke-width="1.5"/><path d="M2.5 3v9M20.5 3v9" stroke="#fff" stroke-width="1.5"/></svg>
<!-- edge -->
<svg class="a" style="left:469px;top:826px" width="22" height="22"><path d="M2 12 C2 4 8 1 12 1 C18 1 21 5 21 11 V13 H7.5 C8 17 11 19 14 19 C17 19 19 18 20.5 17 V20.5 C18.5 21.5 16 22 13.5 22 C6 22 2 17.5 2 12z M7.5 9 H15.5 C15.5 6 14 4.5 11.5 4.5 C9 4.5 7.8 6.5 7.5 9z" fill="#1a7fd4"/></svg>
<!-- explorer -->
<svg class="a" style="left:517px;top:827px" width="24" height="20"><path d="M1 3h8l2 2h12v14H1z" fill="#e2b53c"/><path d="M1 7h22v12H1z" fill="#f4d77a"/><path d="M6 12h12v7h-3v-4h-6v4H6z" fill="#2d8fd5"/></svg>
<div class="a" style="left:509px;top:855px;width:40px;height:2px;background:#a9d3f0"></div>
<!-- store -->
<svg class="a" style="left:565px;top:825px" width="25" height="24"><path d="M8 7 v-2 a4.5 4.5 0 0 1 9 0 v2" stroke="#fff" stroke-width="1.5" fill="none"/><rect x="0.5" y="7" width="24" height="16.5" rx="1" fill="#fff"/><rect x="7" y="10" width="5" height="5" fill="#f25022"/><rect x="13" y="10" width="5" height="5" fill="#7fba00"/><rect x="7" y="16" width="5" height="5" fill="#00a4ef"/><rect x="13" y="16" width="5" height="5" fill="#ffb900"/></svg>
<!-- green app -->
<div class="a" style="left:615px;top:825px;width:24px;height:24px;background:#0e6b3a"></div>
<svg class="a" style="left:615px;top:825px" width="24" height="24"><circle cx="12" cy="12" r="6.8" fill="none" stroke="#e8f0ea" stroke-width="1.2"/><ellipse cx="12" cy="12" rx="4.2" ry="5.6" fill="none" stroke="#e8f0ea" stroke-width="1"/><ellipse cx="12" cy="12" rx="2" ry="4.4" fill="none" stroke="#e8f0ea" stroke-width="1"/></svg>
<!-- chrome -->
<svg class="a" style="left:664px;top:825px" width="24" height="24"><g transform="translate(12 12) rotate(-20)"><path d="M0 0 L-9.96 -5.75 A11.5 11.5 0 0 1 9.96 -5.75z" fill="#db4437"/><path d="M0 0 L9.96 -5.75 A11.5 11.5 0 0 1 0 11.5z" fill="#f4c20d"/><path d="M0 0 L0 11.5 A11.5 11.5 0 0 1 -9.96 -5.75z" fill="#0f9d58"/></g><circle cx="12" cy="12" r="5.4" fill="#fff"/><circle cx="12" cy="12" r="4.2" fill="#4285f4"/></svg>
<div class="a" style="left:656px;top:855px;width:40px;height:2px;background:#a9d3f0"></div>
<!-- mail -->
<svg class="a" style="left:712px;top:826px" width="26" height="21"><path d="M1 7 L13 1 L25 7 V20 H1z" fill="#fff"/><path d="M2.5 7.5 L23.5 7.5 L17 15.5 L16 10.5z" fill="#202020"/></svg>
<!-- excel -->
<div class="a" style="left:750px;top:818px;width:48px;height:39px;background:#4a4a4a"></div>
<svg class="a" style="left:762px;top:826px" width="24" height="22"><rect x="10" y="2" width="13" height="18" fill="#fff"/><path d="M12 6h9M12 9h9M12 12h9M12 15h9M16 3v16" stroke="#217346" stroke-width="1"/><path d="M0 2.5 L13 0 V22 L0 19.5z" fill="#1d6f42"/><text x="2.5" y="15.5" font-size="11" font-weight="bold" font-family="Liberation Sans" fill="#fff">X</text></svg>
<div class="a" style="left:750px;top:855px;width:48px;height:2px;background:#a9d3f0"></div>
<!-- word -->
<svg class="a" style="left:811px;top:826px" width="24" height="22"><rect x="10" y="2" width="13" height="18" fill="#fff"/><path d="M12 5h9M12 8h9M12 11h9M12 14h9M12 17h9" stroke="#2b579a" stroke-width="1"/><path d="M0 2.5 L13 0 V22 L0 19.5z" fill="#2b579a"/><text x="1" y="15.5" font-size="11" font-weight="bold" font-family="Liberation Sans" fill="#fff">W</text></svg>
<div class="a" style="left:803px;top:855px;width:40px;height:2px;background:#a9d3f0"></div>
<div class="a" style="left:868px;top:818px;width:39px;height:39px;background:#2a2828"></div><div class="a" style="left:868px;top:818px;width:1px;height:39px;background:#1a1a1a"></div>
<div class="a" style="left:907px;top:817px;width:96px;height:40px;background:#02080b"></div>
<div class="a" style="left:0;top:857px;width:1003px;height:5px;background:#fafafa"></div>
</body></html>
